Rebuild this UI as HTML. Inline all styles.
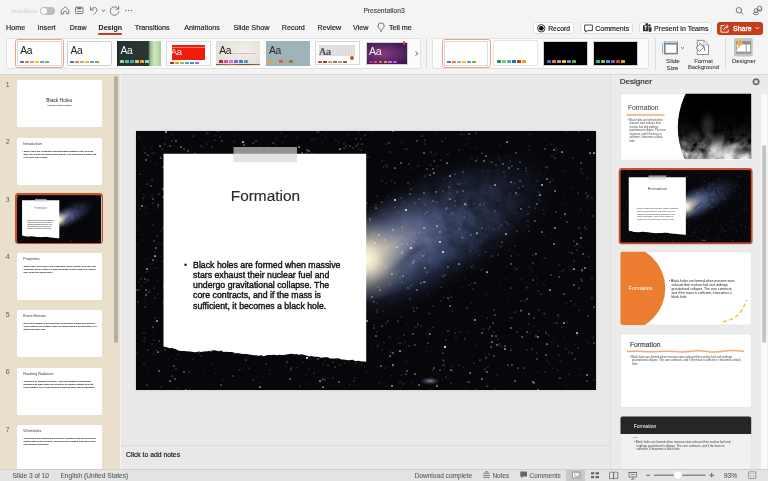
<!DOCTYPE html>
<html><head><meta charset="utf-8">
<style>
*{box-sizing:border-box;margin:0;padding:0}
html,body{width:768px;height:481px;overflow:hidden;background:#f4f4f4;font-family:"Liberation Sans",sans-serif;color:#262626}
.a{position:absolute}
.t{position:absolute;white-space:nowrap;line-height:1;-webkit-text-stroke:0.18px}
#top{left:0;top:0;width:768px;height:75px;background:#f4f4f4;border-bottom:1px solid #d6d6d6}
.gal{position:absolute;top:38px;height:31px;background:#fcfcfc;border:1px solid #e1e1e1;border-radius:2px}
.th{position:absolute;border:1px solid #d9d9d9;border-radius:2px;background:#fff;overflow:hidden}
.sel{position:absolute;border:1.5px solid #f09a85;border-radius:3px}
.dots{position:absolute;height:2.6px;display:flex;gap:0.6px}
.dots i{display:block;width:4.4px;height:2.6px;border-radius:0.5px}
#left{left:0;top:75px;width:120px;height:394px;background:#e9dfca}
.sl{position:absolute;left:17px;width:84.5px;height:47px;background:#fff;border-radius:2px;overflow:hidden}
.num{position:absolute;left:5.5px;font-size:7px;color:#333}
#main{left:121px;top:75px;width:490px;height:394px;background:#e9e9e9}
#designer{left:611px;top:75px;width:157px;height:394px;background:#ebebeb}
#status{left:0;top:469px;width:768px;height:12px;background:#e3e3e3;border-top:1px solid #cfcfcf}
</style></head><body>

<svg width="0" height="0" style="position:absolute">
<defs>
  <radialGradient id="gHalo" cx="0.5" cy="0.5" r="0.5">
    <stop offset="0" stop-color="#56668f" stop-opacity="0.62"/>
    <stop offset="0.55" stop-color="#3c4a72" stop-opacity="0.5"/>
    <stop offset="1" stop-color="#1a2030" stop-opacity="0"/>
  </radialGradient>
  <radialGradient id="gInner" cx="0.5" cy="0.5" r="0.5">
    <stop offset="0" stop-color="#d0ccc4" stop-opacity="0.8"/>
    <stop offset="0.45" stop-color="#7a80a4" stop-opacity="0.5"/>
    <stop offset="1" stop-color="#404a70" stop-opacity="0"/>
  </radialGradient>
  <radialGradient id="gCore" cx="0.5" cy="0.5" r="0.5">
    <stop offset="0" stop-color="#fffbe6" stop-opacity="1"/>
    <stop offset="0.25" stop-color="#f0e8c8" stop-opacity="0.9"/>
    <stop offset="0.6" stop-color="#b8b2a0" stop-opacity="0.45"/>
    <stop offset="1" stop-color="#707080" stop-opacity="0"/>
  </radialGradient>
  <radialGradient id="gSmall" cx="0.5" cy="0.5" r="0.5">
    <stop offset="0" stop-color="#e0e8ff" stop-opacity="0.95"/>
    <stop offset="1" stop-color="#6070a0" stop-opacity="0"/>
  </radialGradient>
  <filter id="mottle" x="0" y="0" width="460" height="259" filterUnits="userSpaceOnUse" color-interpolation-filters="sRGB">
    <feTurbulence type="fractalNoise" baseFrequency="0.075" numOctaves="3" seed="9" result="n"/>
    <feColorMatrix in="n" type="matrix" values="0 0 0 0 0  0 0 0 0 0  0 0 0 0 0  1.0 0 0 0 0.3" result="na"/>
    <feComposite in="SourceGraphic" in2="na" operator="in"/>
  </filter>
  <filter id="gblur" x="-50%" y="-50%" width="200%" height="200%"><feGaussianBlur stdDeviation="2.5"/></filter>
  <symbol id="galaxy" viewBox="0 0 460 259">
    <rect width="460" height="259" fill="#07070b"/>
    <g filter="url(#mottle)"><g transform="translate(300 98) rotate(-26)">
      <ellipse cx="0" cy="0" rx="135" ry="60" fill="url(#gHalo)"/>
      <ellipse cx="-20" cy="6" rx="110" ry="40" fill="url(#gHalo)"/>
    </g></g>
    <g transform="translate(230 128) rotate(-29)">
      <ellipse cx="30" cy="14" rx="95" ry="55" fill="url(#gHalo)" opacity="0.6"/>
      <ellipse cx="24" cy="0" rx="85" ry="46" fill="url(#gInner)"/>
      <path d="M-14 30 Q20 24 56 14" fill="none" stroke="#10131c" stroke-width="5" opacity="0.45" filter="url(#gblur)"/>
      <ellipse cx="0" cy="0" rx="44" ry="44" fill="url(#gCore)"/>
    </g>
    <ellipse cx="294" cy="250" rx="10" ry="4" fill="url(#gSmall)" opacity="0.6"/>
    <g fill="#f4f4ff"><circle cx="76" cy="179" r="0.5" opacity="0.7"/><circle cx="99" cy="205" r="0.65" opacity="0.7"/><circle cx="232" cy="61" r="0.3" opacity="0.6"/><circle cx="269" cy="18" r="0.5" opacity="0.5"/><circle cx="107" cy="11" r="1.1" opacity="0.8"/><circle cx="403" cy="160" r="0.3" opacity="0.6"/><circle cx="229" cy="30" r="0.85" opacity="0.6"/><circle cx="71" cy="212" r="0.3" opacity="1.0"/><circle cx="208" cy="143" r="0.4" opacity="0.7"/><circle cx="86" cy="10" r="0.65" opacity="0.5"/><circle cx="359" cy="54" r="0.85" opacity="0.9"/><circle cx="347" cy="198" r="0.4" opacity="0.8"/><circle cx="56" cy="123" r="0.65" opacity="0.5"/><circle cx="425" cy="230" r="0.4" opacity="0.6"/><circle cx="208" cy="100" r="1.1" opacity="0.6"/><circle cx="12" cy="24" r="0.5" opacity="1.0"/><circle cx="228" cy="127" r="0.4" opacity="0.8"/><circle cx="102" cy="158" r="0.4" opacity="0.8"/><circle cx="83" cy="44" r="0.4" opacity="1.0"/><circle cx="159" cy="155" r="0.4" opacity="0.5"/><circle cx="30" cy="211" r="0.5" opacity="0.6"/><circle cx="314" cy="175" r="0.65" opacity="1.0"/><circle cx="187" cy="256" r="0.85" opacity="0.8"/><circle cx="406" cy="127" r="0.4" opacity="0.5"/><circle cx="403" cy="42" r="0.3" opacity="0.9"/><circle cx="356" cy="125" r="0.65" opacity="0.4"/><circle cx="119" cy="75" r="0.4" opacity="0.5"/><circle cx="32" cy="88" r="0.65" opacity="1.0"/><circle cx="343" cy="124" r="0.3" opacity="1.0"/><circle cx="242" cy="189" r="0.3" opacity="0.5"/><circle cx="386" cy="206" r="0.65" opacity="0.8"/><circle cx="196" cy="151" r="0.65" opacity="0.6"/><circle cx="246" cy="71" r="0.5" opacity="0.4"/><circle cx="315" cy="247" r="0.3" opacity="0.8"/><circle cx="296" cy="221" r="0.4" opacity="0.6"/><circle cx="187" cy="248" r="0.65" opacity="0.5"/><circle cx="44" cy="24" r="0.3" opacity="0.7"/><circle cx="65" cy="225" r="0.5" opacity="0.5"/><circle cx="248" cy="84" r="0.4" opacity="0.5"/><circle cx="76" cy="48" r="0.4" opacity="0.8"/><circle cx="253" cy="12" r="0.5" opacity="0.9"/><circle cx="356" cy="205" r="0.3" opacity="0.7"/><circle cx="29" cy="198" r="0.3" opacity="0.8"/><circle cx="116" cy="180" r="0.4" opacity="0.4"/><circle cx="179" cy="80" r="0.65" opacity="0.6"/><circle cx="231" cy="142" r="0.85" opacity="0.5"/><circle cx="277" cy="132" r="0.5" opacity="1.0"/><circle cx="143" cy="181" r="0.4" opacity="0.7"/><circle cx="29" cy="211" r="0.85" opacity="0.6"/><circle cx="146" cy="257" r="0.3" opacity="0.4"/><circle cx="34" cy="211" r="0.5" opacity="0.7"/><circle cx="286" cy="5" r="0.5" opacity="0.7"/><circle cx="238" cy="101" r="0.4" opacity="0.5"/><circle cx="22" cy="112" r="0.3" opacity="0.8"/><circle cx="376" cy="187" r="0.4" opacity="0.5"/><circle cx="177" cy="126" r="0.5" opacity="1.0"/><circle cx="39" cy="124" r="0.4" opacity="0.8"/><circle cx="410" cy="202" r="0.5" opacity="0.9"/><circle cx="307" cy="222" r="0.5" opacity="0.8"/><circle cx="113" cy="237" r="0.4" opacity="0.8"/><circle cx="379" cy="250" r="1.1" opacity="0.4"/><circle cx="144" cy="81" r="0.4" opacity="0.5"/><circle cx="254" cy="21" r="0.4" opacity="1.0"/><circle cx="341" cy="120" r="0.3" opacity="1.0"/><circle cx="324" cy="53" r="0.4" opacity="0.8"/><circle cx="314" cy="68" r="0.85" opacity="0.6"/><circle cx="117" cy="219" r="0.3" opacity="0.8"/><circle cx="92" cy="155" r="0.3" opacity="0.6"/><circle cx="433" cy="121" r="0.4" opacity="0.8"/><circle cx="129" cy="45" r="0.4" opacity="0.6"/><circle cx="87" cy="249" r="0.3" opacity="0.9"/><circle cx="430" cy="182" r="0.3" opacity="0.7"/><circle cx="18" cy="157" r="0.5" opacity="0.5"/><circle cx="3" cy="141" r="0.3" opacity="0.6"/><circle cx="209" cy="232" r="0.4" opacity="0.5"/><circle cx="364" cy="213" r="0.4" opacity="0.4"/><circle cx="86" cy="104" r="0.4" opacity="0.5"/><circle cx="369" cy="218" r="0.85" opacity="0.9"/><circle cx="8" cy="151" r="0.3" opacity="0.9"/><circle cx="344" cy="197" r="0.3" opacity="0.4"/><circle cx="375" cy="157" r="0.5" opacity="0.7"/><circle cx="368" cy="88" r="0.3" opacity="0.6"/><circle cx="137" cy="162" r="0.65" opacity="0.4"/><circle cx="31" cy="133" r="0.5" opacity="0.5"/><circle cx="124" cy="15" r="0.3" opacity="0.7"/><circle cx="313" cy="169" r="0.3" opacity="0.5"/><circle cx="428" cy="139" r="0.4" opacity="0.8"/><circle cx="335" cy="136" r="0.3" opacity="0.9"/><circle cx="98" cy="10" r="0.4" opacity="0.7"/><circle cx="289" cy="45" r="0.5" opacity="0.7"/><circle cx="75" cy="220" r="0.65" opacity="0.9"/><circle cx="313" cy="56" r="0.5" opacity="0.9"/><circle cx="245" cy="235" r="0.85" opacity="0.6"/><circle cx="433" cy="243" r="0.5" opacity="0.4"/><circle cx="162" cy="159" r="0.5" opacity="0.9"/><circle cx="298" cy="42" r="0.85" opacity="0.7"/><circle cx="406" cy="54" r="1.1" opacity="0.7"/><circle cx="357" cy="192" r="0.65" opacity="0.6"/><circle cx="38" cy="105" r="0.3" opacity="0.7"/><circle cx="375" cy="94" r="0.3" opacity="0.4"/><circle cx="195" cy="150" r="0.3" opacity="0.8"/><circle cx="97" cy="28" r="0.85" opacity="0.7"/><circle cx="412" cy="133" r="0.3" opacity="0.5"/><circle cx="195" cy="166" r="0.5" opacity="0.9"/><circle cx="299" cy="66" r="0.4" opacity="0.6"/><circle cx="225" cy="69" r="0.4" opacity="0.7"/><circle cx="16" cy="213" r="0.4" opacity="0.9"/><circle cx="339" cy="189" r="1.1" opacity="0.6"/><circle cx="181" cy="1" r="0.5" opacity="0.7"/><circle cx="265" cy="258" r="0.3" opacity="0.5"/><circle cx="338" cy="210" r="0.4" opacity="0.4"/><circle cx="170" cy="214" r="0.4" opacity="0.7"/><circle cx="179" cy="163" r="0.4" opacity="0.8"/><circle cx="398" cy="195" r="0.4" opacity="0.6"/><circle cx="360" cy="205" r="0.85" opacity="0.5"/><circle cx="390" cy="231" r="0.3" opacity="0.6"/><circle cx="291" cy="38" r="0.65" opacity="0.6"/><circle cx="314" cy="77" r="0.3" opacity="0.5"/><circle cx="229" cy="185" r="0.3" opacity="0.8"/><circle cx="154" cy="168" r="0.4" opacity="0.5"/><circle cx="65" cy="15" r="0.5" opacity="0.6"/><circle cx="57" cy="228" r="0.5" opacity="0.4"/><circle cx="333" cy="154" r="0.4" opacity="0.7"/><circle cx="443" cy="97" r="0.5" opacity="0.8"/><circle cx="168" cy="90" r="0.5" opacity="0.8"/><circle cx="210" cy="133" r="0.3" opacity="0.9"/><circle cx="9" cy="167" r="0.4" opacity="0.5"/><circle cx="270" cy="151" r="0.3" opacity="0.7"/><circle cx="76" cy="207" r="0.4" opacity="0.6"/><circle cx="99" cy="12" r="0.3" opacity="0.5"/><circle cx="287" cy="219" r="0.3" opacity="0.5"/><circle cx="246" cy="30" r="0.4" opacity="0.9"/><circle cx="93" cy="181" r="0.4" opacity="0.5"/><circle cx="112" cy="155" r="0.3" opacity="0.5"/><circle cx="265" cy="212" r="0.4" opacity="0.8"/><circle cx="4" cy="78" r="0.4" opacity="0.9"/><circle cx="164" cy="203" r="0.3" opacity="0.7"/><circle cx="410" cy="200" r="0.4" opacity="0.5"/><circle cx="426" cy="21" r="0.85" opacity="0.9"/><circle cx="331" cy="137" r="0.3" opacity="0.6"/><circle cx="305" cy="170" r="0.4" opacity="0.9"/><circle cx="25" cy="74" r="0.3" opacity="0.6"/><circle cx="365" cy="195" r="0.3" opacity="0.6"/><circle cx="52" cy="171" r="0.4" opacity="0.5"/><circle cx="172" cy="224" r="0.4" opacity="0.8"/><circle cx="289" cy="123" r="0.4" opacity="0.6"/><circle cx="91" cy="128" r="0.4" opacity="0.6"/><circle cx="86" cy="237" r="0.4" opacity="0.5"/><circle cx="15" cy="55" r="0.65" opacity="0.6"/><circle cx="307" cy="60" r="0.5" opacity="0.7"/><circle cx="339" cy="137" r="0.4" opacity="0.6"/><circle cx="273" cy="215" r="0.5" opacity="0.7"/><circle cx="151" cy="231" r="0.65" opacity="0.5"/><circle cx="312" cy="200" r="0.5" opacity="1.0"/><circle cx="404" cy="64" r="1.1" opacity="0.6"/><circle cx="175" cy="253" r="0.3" opacity="0.6"/><circle cx="288" cy="71" r="0.3" opacity="0.9"/><circle cx="282" cy="193" r="0.5" opacity="0.9"/><circle cx="411" cy="213" r="0.85" opacity="0.7"/><circle cx="323" cy="133" r="0.85" opacity="0.8"/><circle cx="198" cy="172" r="0.3" opacity="0.5"/><circle cx="178" cy="35" r="0.3" opacity="0.5"/><circle cx="209" cy="198" r="0.3" opacity="0.8"/><circle cx="51" cy="132" r="0.3" opacity="0.7"/><circle cx="327" cy="107" r="0.4" opacity="0.8"/><circle cx="53" cy="90" r="0.5" opacity="0.9"/><circle cx="451" cy="67" r="0.5" opacity="0.6"/><circle cx="323" cy="219" r="0.3" opacity="0.6"/><circle cx="431" cy="91" r="0.5" opacity="0.9"/><circle cx="128" cy="203" r="0.3" opacity="0.6"/><circle cx="77" cy="90" r="0.3" opacity="0.4"/><circle cx="369" cy="45" r="0.4" opacity="0.7"/><circle cx="391" cy="219" r="0.5" opacity="0.5"/><circle cx="350" cy="25" r="0.85" opacity="0.6"/><circle cx="116" cy="56" r="0.4" opacity="0.9"/><circle cx="393" cy="193" r="0.5" opacity="0.5"/><circle cx="148" cy="79" r="0.4" opacity="0.9"/><circle cx="458" cy="22" r="0.85" opacity="1.0"/><circle cx="212" cy="179" r="0.5" opacity="0.5"/><circle cx="283" cy="254" r="0.65" opacity="0.9"/><circle cx="39" cy="185" r="0.4" opacity="0.9"/><circle cx="77" cy="142" r="0.3" opacity="0.9"/><circle cx="332" cy="8" r="0.4" opacity="0.5"/><circle cx="292" cy="163" r="0.3" opacity="1.0"/><circle cx="444" cy="114" r="0.4" opacity="0.6"/><circle cx="279" cy="103" r="0.4" opacity="0.8"/><circle cx="86" cy="77" r="0.5" opacity="0.5"/><circle cx="32" cy="236" r="0.3" opacity="0.6"/><circle cx="144" cy="68" r="0.4" opacity="0.7"/><circle cx="53" cy="138" r="0.3" opacity="0.4"/><circle cx="93" cy="62" r="0.4" opacity="0.6"/><circle cx="385" cy="170" r="0.4" opacity="0.9"/><circle cx="316" cy="82" r="0.5" opacity="0.8"/><circle cx="246" cy="195" r="0.5" opacity="1.0"/><circle cx="121" cy="174" r="0.85" opacity="0.7"/><circle cx="416" cy="25" r="0.5" opacity="0.6"/><circle cx="345" cy="110" r="0.4" opacity="0.5"/><circle cx="118" cy="224" r="0.5" opacity="0.8"/><circle cx="53" cy="76" r="0.85" opacity="0.5"/><circle cx="247" cy="180" r="0.4" opacity="0.7"/><circle cx="446" cy="202" r="0.3" opacity="0.7"/><circle cx="193" cy="177" r="0.5" opacity="0.6"/><circle cx="319" cy="112" r="0.3" opacity="0.6"/><circle cx="173" cy="51" r="0.5" opacity="1.0"/><circle cx="428" cy="163" r="0.65" opacity="0.7"/><circle cx="270" cy="231" r="0.3" opacity="0.6"/><circle cx="172" cy="88" r="0.4" opacity="0.4"/><circle cx="312" cy="248" r="0.3" opacity="0.5"/><circle cx="154" cy="206" r="0.3" opacity="0.9"/><circle cx="79" cy="154" r="0.5" opacity="0.8"/><circle cx="39" cy="248" r="0.65" opacity="0.7"/><circle cx="395" cy="156" r="0.3" opacity="0.6"/><circle cx="378" cy="120" r="0.3" opacity="0.5"/><circle cx="86" cy="152" r="0.5" opacity="0.7"/><circle cx="186" cy="249" r="0.4" opacity="0.8"/><circle cx="94" cy="133" r="0.3" opacity="0.5"/><circle cx="155" cy="30" r="0.4" opacity="0.8"/><circle cx="253" cy="206" r="0.4" opacity="0.5"/><circle cx="335" cy="104" r="0.5" opacity="1.0"/><circle cx="241" cy="65" r="0.4" opacity="0.7"/><circle cx="147" cy="26" r="0.4" opacity="0.8"/><circle cx="375" cy="197" r="0.65" opacity="0.9"/><circle cx="189" cy="167" r="0.3" opacity="0.9"/><circle cx="326" cy="69" r="0.4" opacity="0.6"/><circle cx="366" cy="111" r="0.5" opacity="1.0"/><circle cx="358" cy="98" r="0.4" opacity="1.0"/><circle cx="416" cy="49" r="0.4" opacity="0.9"/><circle cx="348" cy="73" r="0.4" opacity="1.0"/><circle cx="41" cy="71" r="0.5" opacity="0.9"/><circle cx="436" cy="122" r="0.5" opacity="1.0"/><circle cx="152" cy="59" r="0.3" opacity="0.9"/><circle cx="64" cy="142" r="0.85" opacity="0.5"/><circle cx="289" cy="137" r="0.85" opacity="0.7"/><circle cx="226" cy="234" r="0.5" opacity="0.5"/><circle cx="370" cy="103" r="0.85" opacity="1.0"/><circle cx="227" cy="108" r="0.3" opacity="0.6"/><circle cx="95" cy="44" r="0.5" opacity="0.4"/><circle cx="275" cy="155" r="0.5" opacity="0.7"/><circle cx="427" cy="73" r="0.3" opacity="0.7"/><circle cx="124" cy="256" r="0.85" opacity="0.8"/><circle cx="383" cy="63" r="0.4" opacity="0.6"/><circle cx="159" cy="97" r="0.4" opacity="0.8"/><circle cx="12" cy="140" r="0.3" opacity="1.0"/><circle cx="254" cy="153" r="0.4" opacity="0.8"/><circle cx="327" cy="236" r="0.4" opacity="0.6"/><circle cx="289" cy="13" r="0.5" opacity="0.6"/><circle cx="331" cy="34" r="0.4" opacity="0.5"/><circle cx="17" cy="68" r="0.65" opacity="0.6"/><circle cx="240" cy="205" r="0.85" opacity="0.6"/><circle cx="319" cy="202" r="0.5" opacity="0.6"/><circle cx="218" cy="203" r="0.3" opacity="0.7"/><circle cx="291" cy="220" r="0.3" opacity="0.8"/><circle cx="100" cy="41" r="0.4" opacity="0.8"/><circle cx="294" cy="246" r="0.3" opacity="0.7"/><circle cx="221" cy="67" r="0.65" opacity="0.5"/><circle cx="120" cy="10" r="0.5" opacity="0.8"/><circle cx="103" cy="239" r="0.5" opacity="0.5"/><circle cx="433" cy="221" r="0.4" opacity="0.9"/><circle cx="60" cy="90" r="0.4" opacity="1.0"/><circle cx="137" cy="100" r="0.3" opacity="0.9"/><circle cx="84" cy="220" r="0.4" opacity="0.7"/><circle cx="403" cy="69" r="0.4" opacity="0.8"/><circle cx="266" cy="106" r="0.5" opacity="0.6"/><circle cx="71" cy="2" r="0.5" opacity="0.7"/><circle cx="368" cy="41" r="0.5" opacity="0.7"/><circle cx="242" cy="215" r="0.4" opacity="0.7"/><circle cx="297" cy="38" r="0.65" opacity="0.7"/><circle cx="19" cy="125" r="0.85" opacity="1.0"/><circle cx="196" cy="69" r="0.85" opacity="0.6"/><circle cx="8" cy="64" r="0.4" opacity="0.8"/><circle cx="31" cy="87" r="0.5" opacity="0.6"/><circle cx="81" cy="184" r="0.4" opacity="0.8"/><circle cx="223" cy="210" r="0.4" opacity="1.0"/><circle cx="374" cy="187" r="0.4" opacity="0.8"/><circle cx="173" cy="20" r="0.65" opacity="0.9"/><circle cx="353" cy="223" r="0.4" opacity="1.0"/><circle cx="218" cy="254" r="0.3" opacity="0.6"/><circle cx="263" cy="212" r="0.4" opacity="0.9"/><circle cx="172" cy="175" r="0.5" opacity="0.8"/><circle cx="10" cy="170" r="0.3" opacity="0.6"/><circle cx="53" cy="198" r="0.3" opacity="0.8"/><circle cx="33" cy="54" r="0.5" opacity="1.0"/><circle cx="33" cy="159" r="0.4" opacity="0.8"/><circle cx="36" cy="4" r="0.3" opacity="0.9"/><circle cx="226" cy="159" r="0.3" opacity="0.8"/><circle cx="414" cy="51" r="0.5" opacity="0.9"/><circle cx="456" cy="147" r="0.5" opacity="0.6"/><circle cx="359" cy="80" r="0.5" opacity="0.8"/><circle cx="455" cy="204" r="0.3" opacity="0.5"/><circle cx="164" cy="103" r="0.5" opacity="0.6"/><circle cx="257" cy="117" r="0.4" opacity="0.8"/><circle cx="200" cy="254" r="0.3" opacity="0.9"/><circle cx="293" cy="119" r="0.3" opacity="0.8"/><circle cx="370" cy="91" r="0.5" opacity="0.7"/><circle cx="42" cy="223" r="0.4" opacity="0.7"/><circle cx="350" cy="227" r="0.65" opacity="0.6"/><circle cx="390" cy="40" r="0.4" opacity="0.7"/><circle cx="398" cy="187" r="0.5" opacity="0.9"/><circle cx="160" cy="115" r="0.3" opacity="0.6"/><circle cx="92" cy="189" r="0.3" opacity="0.9"/><circle cx="276" cy="116" r="0.3" opacity="0.7"/><circle cx="259" cy="37" r="0.85" opacity="0.6"/><circle cx="200" cy="74" r="0.4" opacity="0.6"/><circle cx="393" cy="19" r="0.4" opacity="0.8"/><circle cx="221" cy="84" r="0.4" opacity="0.4"/><circle cx="141" cy="113" r="0.5" opacity="0.7"/><circle cx="191" cy="169" r="0.3" opacity="0.7"/><circle cx="90" cy="160" r="0.4" opacity="0.8"/><circle cx="402" cy="206" r="1.1" opacity="0.5"/><circle cx="439" cy="115" r="0.4" opacity="0.7"/><circle cx="424" cy="247" r="0.65" opacity="0.6"/><circle cx="55" cy="53" r="0.5" opacity="0.8"/><circle cx="30" cy="1" r="1.1" opacity="0.6"/><circle cx="19" cy="121" r="0.3" opacity="0.9"/><circle cx="244" cy="159" r="0.85" opacity="0.5"/><circle cx="99" cy="204" r="0.5" opacity="0.7"/><circle cx="164" cy="160" r="0.85" opacity="1.0"/><circle cx="422" cy="253" r="0.3" opacity="0.4"/><circle cx="381" cy="64" r="0.4" opacity="0.7"/><circle cx="448" cy="115" r="0.3" opacity="0.5"/><circle cx="416" cy="211" r="0.3" opacity="1.0"/><circle cx="171" cy="188" r="0.4" opacity="0.9"/><circle cx="225" cy="8" r="0.4" opacity="0.9"/><circle cx="189" cy="214" r="0.4" opacity="0.6"/><circle cx="165" cy="59" r="0.4" opacity="1.0"/><circle cx="272" cy="199" r="0.3" opacity="0.6"/><circle cx="267" cy="99" r="0.3" opacity="0.9"/><circle cx="59" cy="171" r="1.1" opacity="0.6"/><circle cx="124" cy="86" r="0.4" opacity="1.0"/><circle cx="67" cy="63" r="0.65" opacity="0.6"/><circle cx="307" cy="187" r="0.3" opacity="0.4"/><circle cx="349" cy="238" r="0.5" opacity="0.7"/><circle cx="46" cy="136" r="0.3" opacity="0.6"/><circle cx="16" cy="133" r="0.4" opacity="0.6"/><circle cx="102" cy="17" r="0.3" opacity="0.5"/><circle cx="452" cy="9" r="0.5" opacity="0.7"/><circle cx="270" cy="79" r="1.1" opacity="0.9"/><circle cx="186" cy="112" r="0.65" opacity="0.5"/><circle cx="402" cy="160" r="0.4" opacity="0.7"/><circle cx="272" cy="24" r="0.3" opacity="0.6"/><circle cx="102" cy="22" r="0.5" opacity="0.7"/><circle cx="341" cy="102" r="0.85" opacity="0.5"/><circle cx="236" cy="110" r="0.5" opacity="0.5"/><circle cx="251" cy="118" r="0.5" opacity="0.5"/><circle cx="250" cy="255" r="0.3" opacity="1.0"/><circle cx="445" cy="116" r="0.3" opacity="0.7"/><circle cx="443" cy="0" r="0.5" opacity="0.9"/><circle cx="53" cy="156" r="0.3" opacity="0.5"/><circle cx="240" cy="77" r="0.5" opacity="0.7"/><circle cx="106" cy="238" r="0.3" opacity="0.9"/><circle cx="130" cy="233" r="0.5" opacity="0.7"/><circle cx="99" cy="222" r="0.65" opacity="1.0"/><circle cx="271" cy="240" r="0.65" opacity="0.8"/><circle cx="156" cy="156" r="0.4" opacity="0.9"/><circle cx="254" cy="225" r="0.65" opacity="0.9"/><circle cx="93" cy="87" r="0.3" opacity="0.6"/><circle cx="72" cy="78" r="0.5" opacity="0.5"/><circle cx="422" cy="239" r="0.5" opacity="0.5"/><circle cx="134" cy="118" r="0.5" opacity="1.0"/><circle cx="9" cy="22" r="0.65" opacity="0.4"/><circle cx="411" cy="48" r="0.85" opacity="0.7"/><circle cx="279" cy="214" r="0.65" opacity="0.6"/><circle cx="212" cy="204" r="0.3" opacity="0.6"/><circle cx="401" cy="228" r="0.65" opacity="0.6"/><circle cx="158" cy="27" r="0.65" opacity="0.4"/><circle cx="84" cy="6" r="0.4" opacity="1.0"/><circle cx="32" cy="65" r="0.3" opacity="0.8"/><circle cx="164" cy="45" r="0.5" opacity="0.9"/><circle cx="76" cy="16" r="0.4" opacity="1.0"/><circle cx="27" cy="36" r="0.5" opacity="0.9"/><circle cx="208" cy="12" r="0.4" opacity="0.5"/><circle cx="34" cy="15" r="0.85" opacity="0.5"/><circle cx="219" cy="213" r="0.3" opacity="0.6"/><circle cx="365" cy="146" r="0.3" opacity="0.7"/><circle cx="458" cy="212" r="0.85" opacity="0.4"/><circle cx="27" cy="130" r="0.3" opacity="1.0"/><circle cx="134" cy="142" r="0.65" opacity="0.7"/><circle cx="352" cy="40" r="0.4" opacity="0.8"/><circle cx="215" cy="48" r="0.65" opacity="0.6"/><circle cx="420" cy="81" r="0.65" opacity="0.5"/><circle cx="310" cy="246" r="0.5" opacity="0.6"/><circle cx="451" cy="250" r="0.65" opacity="0.5"/><circle cx="41" cy="159" r="0.3" opacity="0.4"/><circle cx="255" cy="245" r="0.3" opacity="0.9"/><circle cx="442" cy="244" r="0.3" opacity="0.5"/><circle cx="439" cy="250" r="0.3" opacity="0.5"/><circle cx="328" cy="25" r="0.3" opacity="0.5"/><circle cx="266" cy="96" r="0.65" opacity="0.5"/><circle cx="413" cy="204" r="0.4" opacity="0.8"/><circle cx="311" cy="32" r="0.85" opacity="0.7"/><circle cx="237" cy="221" r="0.3" opacity="0.6"/><circle cx="14" cy="191" r="0.3" opacity="0.8"/><circle cx="330" cy="258" r="0.3" opacity="0.6"/><circle cx="363" cy="115" r="0.3" opacity="0.8"/><circle cx="365" cy="116" r="0.4" opacity="0.5"/><circle cx="187" cy="218" r="0.4" opacity="1.0"/><circle cx="165" cy="123" r="0.5" opacity="0.9"/><circle cx="389" cy="109" r="0.4" opacity="0.5"/><circle cx="248" cy="212" r="0.3" opacity="0.6"/><circle cx="30" cy="118" r="0.4" opacity="1.0"/><circle cx="308" cy="238" r="0.3" opacity="0.7"/><circle cx="323" cy="19" r="0.4" opacity="0.8"/><circle cx="12" cy="53" r="0.5" opacity="0.5"/><circle cx="293" cy="109" r="0.4" opacity="0.9"/><circle cx="182" cy="228" r="0.65" opacity="0.7"/><circle cx="47" cy="86" r="0.85" opacity="0.6"/><circle cx="272" cy="52" r="0.5" opacity="0.8"/><circle cx="409" cy="154" r="0.3" opacity="0.9"/><circle cx="265" cy="244" r="0.4" opacity="0.6"/><circle cx="204" cy="145" r="0.5" opacity="0.8"/><circle cx="396" cy="139" r="0.3" opacity="0.9"/><circle cx="327" cy="41" r="0.4" opacity="0.9"/><circle cx="265" cy="32" r="0.65" opacity="0.8"/><circle cx="91" cy="180" r="0.65" opacity="0.7"/><circle cx="436" cy="139" r="0.3" opacity="0.8"/><circle cx="382" cy="237" r="0.5" opacity="1.0"/><circle cx="369" cy="123" r="0.3" opacity="0.5"/><circle cx="23" cy="240" r="0.65" opacity="0.9"/><circle cx="357" cy="117" r="0.4" opacity="0.4"/><circle cx="74" cy="104" r="0.3" opacity="0.6"/><circle cx="239" cy="42" r="0.3" opacity="0.5"/><circle cx="210" cy="217" r="0.4" opacity="0.8"/><circle cx="329" cy="208" r="0.5" opacity="0.7"/><circle cx="21" cy="44" r="0.3" opacity="0.6"/><circle cx="275" cy="129" r="0.3" opacity="0.5"/><circle cx="340" cy="258" r="0.5" opacity="0.5"/><circle cx="320" cy="207" r="0.4" opacity="0.8"/><circle cx="397" cy="124" r="0.5" opacity="0.5"/><circle cx="385" cy="148" r="0.3" opacity="0.8"/><circle cx="379" cy="115" r="0.4" opacity="0.8"/><circle cx="458" cy="249" r="0.4" opacity="0.7"/><circle cx="173" cy="37" r="0.4" opacity="0.6"/><circle cx="220" cy="215" r="0.4" opacity="1.0"/><circle cx="93" cy="48" r="0.3" opacity="0.8"/><circle cx="132" cy="57" r="0.5" opacity="1.0"/><circle cx="346" cy="248" r="0.85" opacity="0.7"/><circle cx="101" cy="198" r="0.3" opacity="0.4"/><circle cx="172" cy="191" r="0.5" opacity="0.6"/><circle cx="58" cy="45" r="0.5" opacity="0.7"/><circle cx="250" cy="192" r="0.4" opacity="0.9"/><circle cx="423" cy="134" r="0.4" opacity="0.7"/><circle cx="115" cy="45" r="0.5" opacity="0.7"/><circle cx="10" cy="102" r="0.4" opacity="0.4"/><circle cx="10" cy="159" r="0.65" opacity="0.9"/><circle cx="275" cy="58" r="0.5" opacity="0.6"/><circle cx="106" cy="85" r="0.3" opacity="0.5"/><circle cx="454" cy="22" r="0.85" opacity="0.8"/><circle cx="341" cy="29" r="0.5" opacity="0.5"/><circle cx="234" cy="117" r="0.65" opacity="0.5"/><circle cx="3" cy="151" r="0.4" opacity="0.8"/><circle cx="40" cy="96" r="0.5" opacity="0.8"/><circle cx="145" cy="2" r="0.3" opacity="0.9"/><circle cx="126" cy="18" r="0.3" opacity="0.5"/><circle cx="250" cy="13" r="0.4" opacity="0.8"/><circle cx="247" cy="155" r="0.3" opacity="0.6"/><circle cx="344" cy="74" r="0.65" opacity="0.5"/><circle cx="220" cy="232" r="0.5" opacity="0.6"/><circle cx="168" cy="73" r="0.5" opacity="0.6"/><circle cx="385" cy="180" r="0.65" opacity="0.7"/><circle cx="130" cy="178" r="0.4" opacity="0.4"/><circle cx="207" cy="48" r="0.3" opacity="0.6"/><circle cx="439" cy="173" r="0.4" opacity="0.7"/><circle cx="178" cy="146" r="0.3" opacity="0.9"/><circle cx="365" cy="115" r="0.4" opacity="0.6"/><circle cx="355" cy="216" r="0.85" opacity="0.5"/><circle cx="418" cy="57" r="0.3" opacity="0.6"/><circle cx="298" cy="30" r="0.5" opacity="1.0"/><circle cx="358" cy="214" r="0.3" opacity="0.6"/><circle cx="114" cy="96" r="0.65" opacity="1.0"/><circle cx="122" cy="145" r="0.5" opacity="1.0"/><circle cx="207" cy="31" r="0.3" opacity="0.5"/><circle cx="219" cy="24" r="0.5" opacity="0.5"/><circle cx="19" cy="187" r="0.4" opacity="0.9"/><circle cx="266" cy="99" r="0.3" opacity="0.9"/><circle cx="313" cy="68" r="0.3" opacity="0.8"/><circle cx="428" cy="192" r="0.85" opacity="1.0"/><circle cx="58" cy="48" r="0.4" opacity="0.5"/><circle cx="223" cy="211" r="0.3" opacity="0.9"/><circle cx="117" cy="211" r="0.3" opacity="0.5"/><circle cx="21" cy="150" r="0.3" opacity="0.8"/><circle cx="192" cy="234" r="0.4" opacity="0.9"/><circle cx="346" cy="97" r="0.5" opacity="0.8"/><circle cx="273" cy="110" r="0.3" opacity="0.7"/><circle cx="239" cy="112" r="1.1" opacity="0.5"/><circle cx="419" cy="145" r="0.3" opacity="0.7"/><circle cx="86" cy="128" r="0.4" opacity="0.9"/><circle cx="418" cy="19" r="0.65" opacity="1.0"/><circle cx="70" cy="21" r="0.4" opacity="0.4"/><circle cx="57" cy="132" r="0.3" opacity="0.8"/><circle cx="96" cy="173" r="0.5" opacity="0.4"/><circle cx="315" cy="239" r="1.1" opacity="0.4"/><circle cx="317" cy="83" r="0.4" opacity="0.7"/><circle cx="22" cy="163" r="0.3" opacity="0.9"/><circle cx="47" cy="161" r="0.4" opacity="0.4"/><circle cx="52" cy="128" r="0.4" opacity="0.5"/><circle cx="47" cy="60" r="0.65" opacity="0.5"/><circle cx="348" cy="30" r="0.65" opacity="0.9"/><circle cx="406" cy="101" r="0.85" opacity="0.6"/><circle cx="290" cy="215" r="0.3" opacity="0.4"/><circle cx="319" cy="59" r="0.3" opacity="0.7"/><circle cx="79" cy="70" r="0.3" opacity="0.5"/><circle cx="375" cy="219" r="0.5" opacity="0.7"/><circle cx="424" cy="141" r="0.4" opacity="0.4"/><circle cx="164" cy="56" r="0.5" opacity="1.0"/><circle cx="289" cy="83" r="0.65" opacity="0.4"/><circle cx="371" cy="11" r="0.85" opacity="0.9"/><circle cx="453" cy="125" r="0.5" opacity="0.6"/><circle cx="345" cy="139" r="0.4" opacity="0.9"/><circle cx="432" cy="72" r="0.3" opacity="1.0"/><circle cx="155" cy="95" r="0.4" opacity="0.6"/><circle cx="210" cy="71" r="0.4" opacity="0.9"/><circle cx="351" cy="241" r="0.85" opacity="0.6"/><circle cx="358" cy="179" r="0.5" opacity="0.7"/><circle cx="423" cy="146" r="0.85" opacity="0.5"/><circle cx="165" cy="34" r="0.5" opacity="0.7"/><circle cx="147" cy="87" r="0.4" opacity="0.6"/><circle cx="227" cy="161" r="0.3" opacity="0.5"/><circle cx="241" cy="172" r="0.4" opacity="0.8"/><circle cx="199" cy="236" r="0.5" opacity="0.7"/><circle cx="262" cy="208" r="0.3" opacity="0.6"/><circle cx="230" cy="131" r="0.3" opacity="0.7"/><circle cx="423" cy="224" r="0.4" opacity="0.8"/><circle cx="171" cy="19" r="0.65" opacity="0.7"/><circle cx="281" cy="159" r="0.85" opacity="0.6"/><circle cx="262" cy="190" r="0.5" opacity="0.9"/><circle cx="19" cy="206" r="0.3" opacity="0.6"/><circle cx="162" cy="207" r="0.65" opacity="0.7"/><circle cx="256" cy="172" r="0.3" opacity="0.6"/><circle cx="208" cy="13" r="0.4" opacity="0.6"/><circle cx="59" cy="49" r="0.4" opacity="0.8"/><circle cx="392" cy="83" r="0.5" opacity="0.8"/><circle cx="47" cy="52" r="0.65" opacity="0.5"/><circle cx="288" cy="151" r="0.65" opacity="0.9"/><circle cx="376" cy="35" r="0.5" opacity="0.9"/><circle cx="306" cy="248" r="0.3" opacity="0.7"/><circle cx="445" cy="78" r="0.4" opacity="0.6"/><circle cx="172" cy="112" r="0.4" opacity="0.6"/><circle cx="230" cy="241" r="0.4" opacity="0.5"/><circle cx="422" cy="184" r="0.5" opacity="0.9"/><circle cx="452" cy="79" r="0.3" opacity="0.8"/><circle cx="304" cy="101" r="0.65" opacity="0.9"/><circle cx="262" cy="159" r="0.4" opacity="0.5"/><circle cx="135" cy="188" r="0.4" opacity="0.7"/><circle cx="301" cy="243" r="0.3" opacity="0.5"/><circle cx="354" cy="56" r="0.4" opacity="0.7"/><circle cx="308" cy="166" r="0.4" opacity="0.8"/><circle cx="430" cy="218" r="0.4" opacity="0.8"/><circle cx="134" cy="239" r="0.3" opacity="0.7"/><circle cx="352" cy="236" r="0.4" opacity="0.7"/><circle cx="279" cy="196" r="0.4" opacity="0.8"/><circle cx="117" cy="20" r="0.3" opacity="0.5"/><circle cx="187" cy="34" r="0.5" opacity="0.8"/><circle cx="177" cy="46" r="0.4" opacity="0.9"/><circle cx="385" cy="179" r="0.4" opacity="0.9"/><circle cx="234" cy="88" r="0.65" opacity="0.8"/><circle cx="26" cy="18" r="0.4" opacity="0.9"/><circle cx="201" cy="137" r="0.3" opacity="0.8"/><circle cx="188" cy="94" r="0.3" opacity="0.8"/><circle cx="381" cy="138" r="0.5" opacity="0.7"/><circle cx="326" cy="181" r="0.3" opacity="1.0"/><circle cx="226" cy="13" r="0.5" opacity="0.9"/><circle cx="169" cy="155" r="0.3" opacity="0.8"/><circle cx="310" cy="209" r="0.4" opacity="1.0"/><circle cx="191" cy="1" r="0.3" opacity="0.6"/><circle cx="103" cy="60" r="0.3" opacity="0.8"/><circle cx="409" cy="241" r="0.4" opacity="0.7"/><circle cx="242" cy="156" r="0.5" opacity="0.7"/><circle cx="9" cy="82" r="0.3" opacity="0.8"/><circle cx="445" cy="148" r="0.5" opacity="0.7"/><circle cx="447" cy="43" r="0.4" opacity="0.6"/><circle cx="211" cy="56" r="0.5" opacity="0.6"/><circle cx="123" cy="222" r="0.3" opacity="0.5"/><circle cx="427" cy="173" r="0.3" opacity="0.5"/><circle cx="309" cy="216" r="1.1" opacity="1.0"/><circle cx="346" cy="22" r="0.5" opacity="0.7"/><circle cx="245" cy="6" r="0.3" opacity="0.7"/><circle cx="297" cy="70" r="0.85" opacity="0.4"/><circle cx="402" cy="241" r="0.3" opacity="0.9"/><circle cx="283" cy="113" r="0.4" opacity="0.7"/><circle cx="426" cy="196" r="0.4" opacity="0.7"/><circle cx="81" cy="142" r="0.65" opacity="0.8"/><circle cx="275" cy="117" r="1.1" opacity="0.9"/><circle cx="238" cy="171" r="0.65" opacity="0.6"/><circle cx="289" cy="74" r="0.5" opacity="0.6"/><circle cx="443" cy="179" r="0.4" opacity="0.7"/><circle cx="268" cy="69" r="0.3" opacity="0.7"/><circle cx="135" cy="122" r="0.3" opacity="0.5"/><circle cx="450" cy="98" r="0.5" opacity="0.5"/><circle cx="40" cy="179" r="0.4" opacity="0.9"/><circle cx="10" cy="128" r="0.4" opacity="0.5"/><circle cx="329" cy="51" r="0.3" opacity="0.5"/><circle cx="21" cy="105" r="0.5" opacity="0.5"/><circle cx="130" cy="87" r="0.3" opacity="0.9"/><circle cx="384" cy="31" r="0.5" opacity="0.9"/><circle cx="6" cy="104" r="0.3" opacity="0.6"/><circle cx="57" cy="119" r="0.3" opacity="0.8"/><circle cx="176" cy="22" r="0.4" opacity="0.7"/><circle cx="340" cy="193" r="0.3" opacity="0.6"/><circle cx="331" cy="251" r="0.4" opacity="0.8"/><circle cx="154" cy="113" r="0.4" opacity="0.7"/><circle cx="132" cy="83" r="0.3" opacity="0.5"/><circle cx="399" cy="90" r="0.85" opacity="0.5"/><circle cx="167" cy="231" r="0.4" opacity="0.8"/><circle cx="357" cy="100" r="0.3" opacity="0.4"/><circle cx="397" cy="149" r="0.5" opacity="1.0"/><circle cx="401" cy="153" r="0.3" opacity="0.7"/><circle cx="223" cy="26" r="0.3" opacity="0.6"/><circle cx="171" cy="227" r="1.1" opacity="1.0"/><circle cx="148" cy="221" r="0.4" opacity="0.6"/><circle cx="266" cy="11" r="0.5" opacity="0.4"/><circle cx="271" cy="193" r="0.3" opacity="0.8"/><circle cx="234" cy="90" r="0.5" opacity="0.6"/><circle cx="88" cy="107" r="0.4" opacity="0.9"/><circle cx="95" cy="103" r="0.5" opacity="0.7"/><circle cx="156" cy="38" r="0.4" opacity="0.7"/><circle cx="359" cy="258" r="0.4" opacity="0.7"/><circle cx="349" cy="121" r="0.3" opacity="0.8"/><circle cx="383" cy="57" r="0.65" opacity="0.4"/><circle cx="87" cy="98" r="0.65" opacity="0.7"/><circle cx="159" cy="63" r="0.4" opacity="0.7"/><circle cx="275" cy="231" r="0.3" opacity="0.8"/><circle cx="443" cy="157" r="0.5" opacity="0.9"/><circle cx="408" cy="83" r="0.4" opacity="0.9"/><circle cx="73" cy="116" r="0.85" opacity="0.6"/><circle cx="199" cy="110" r="0.4" opacity="0.9"/><circle cx="50" cy="119" r="0.4" opacity="1.0"/><circle cx="393" cy="76" r="0.4" opacity="1.0"/><circle cx="6" cy="181" r="0.3" opacity="0.6"/><circle cx="297" cy="175" r="0.5" opacity="0.5"/><circle cx="185" cy="221" r="0.3" opacity="0.7"/><circle cx="257" cy="222" r="0.65" opacity="0.9"/><circle cx="155" cy="191" r="0.65" opacity="0.4"/><circle cx="334" cy="120" r="0.4" opacity="0.8"/><circle cx="372" cy="234" r="0.5" opacity="1.0"/><circle cx="397" cy="132" r="0.5" opacity="0.9"/><circle cx="271" cy="18" r="0.4" opacity="0.8"/><circle cx="10" cy="29" r="0.65" opacity="0.8"/><circle cx="8" cy="202" r="0.5" opacity="0.6"/><circle cx="297" cy="24" r="0.3" opacity="0.8"/><circle cx="314" cy="160" r="0.4" opacity="0.5"/><circle cx="59" cy="242" r="0.3" opacity="0.6"/><circle cx="235" cy="1" r="0.4" opacity="0.5"/><circle cx="48" cy="241" r="0.3" opacity="0.6"/><circle cx="124" cy="204" r="0.65" opacity="0.8"/><circle cx="291" cy="155" r="0.3" opacity="0.8"/><circle cx="439" cy="228" r="0.65" opacity="0.5"/><circle cx="328" cy="257" r="0.3" opacity="0.6"/><circle cx="450" cy="63" r="0.3" opacity="0.8"/><circle cx="149" cy="161" r="0.3" opacity="0.5"/><circle cx="271" cy="113" r="0.5" opacity="0.7"/><circle cx="111" cy="53" r="0.3" opacity="0.4"/><circle cx="327" cy="86" r="0.3" opacity="0.4"/><circle cx="394" cy="162" r="0.3" opacity="0.9"/><circle cx="411" cy="14" r="0.3" opacity="0.8"/><circle cx="357" cy="69" r="0.4" opacity="0.6"/><circle cx="176" cy="216" r="0.4" opacity="0.8"/><circle cx="417" cy="237" r="0.5" opacity="0.4"/><circle cx="170" cy="251" r="0.4" opacity="0.4"/><circle cx="309" cy="144" r="0.5" opacity="0.7"/><circle cx="130" cy="97" r="0.3" opacity="0.7"/><circle cx="234" cy="34" r="0.3" opacity="0.8"/><circle cx="293" cy="200" r="0.4" opacity="0.5"/><circle cx="240" cy="77" r="0.65" opacity="0.5"/><circle cx="372" cy="167" r="0.3" opacity="0.8"/><circle cx="31" cy="70" r="0.5" opacity="0.4"/><circle cx="257" cy="234" r="0.85" opacity="0.9"/><circle cx="380" cy="82" r="0.4" opacity="0.6"/><circle cx="30" cy="22" r="0.3" opacity="0.5"/><circle cx="153" cy="98" r="0.4" opacity="0.9"/><circle cx="168" cy="121" r="0.65" opacity="0.7"/><circle cx="333" cy="251" r="0.65" opacity="0.6"/><circle cx="387" cy="240" r="0.3" opacity="0.5"/><circle cx="335" cy="172" r="0.3" opacity="1.0"/><circle cx="214" cy="254" r="0.4" opacity="0.8"/><circle cx="63" cy="210" r="0.4" opacity="0.5"/><circle cx="196" cy="171" r="0.65" opacity="0.9"/><circle cx="422" cy="197" r="0.4" opacity="0.5"/><circle cx="418" cy="113" r="0.85" opacity="0.8"/><circle cx="364" cy="152" r="0.3" opacity="0.7"/><circle cx="305" cy="29" r="0.4" opacity="0.9"/><circle cx="99" cy="3" r="0.3" opacity="0.7"/><circle cx="129" cy="136" r="0.3" opacity="0.7"/><circle cx="422" cy="215" r="0.5" opacity="0.7"/><circle cx="255" cy="207" r="0.3" opacity="0.6"/><circle cx="63" cy="118" r="0.4" opacity="0.8"/><circle cx="167" cy="169" r="0.4" opacity="0.8"/><circle cx="198" cy="108" r="0.3" opacity="0.8"/><circle cx="148" cy="74" r="0.65" opacity="0.7"/><circle cx="50" cy="161" r="0.4" opacity="0.6"/><circle cx="278" cy="130" r="0.65" opacity="0.6"/><circle cx="374" cy="219" r="0.3" opacity="0.4"/><circle cx="71" cy="138" r="0.65" opacity="0.7"/><circle cx="110" cy="152" r="0.5" opacity="1.0"/><circle cx="255" cy="50" r="0.4" opacity="0.7"/><circle cx="97" cy="26" r="0.65" opacity="0.6"/><circle cx="401" cy="147" r="0.3" opacity="0.9"/><circle cx="451" cy="47" r="0.5" opacity="0.4"/><circle cx="411" cy="36" r="0.5" opacity="0.8"/><circle cx="271" cy="229" r="0.3" opacity="1.0"/><circle cx="300" cy="29" r="0.3" opacity="0.5"/><circle cx="55" cy="99" r="0.3" opacity="0.6"/><circle cx="393" cy="182" r="0.3" opacity="0.5"/><circle cx="42" cy="81" r="0.3" opacity="0.5"/><circle cx="457" cy="85" r="0.65" opacity="0.4"/><circle cx="71" cy="13" r="0.4" opacity="0.9"/><circle cx="392" cy="95" r="0.5" opacity="0.6"/><circle cx="240" cy="74" r="0.4" opacity="0.8"/><circle cx="178" cy="51" r="0.4" opacity="0.4"/><circle cx="173" cy="238" r="0.4" opacity="0.6"/><circle cx="217" cy="138" r="0.3" opacity="0.7"/><circle cx="125" cy="28" r="0.3" opacity="0.6"/><circle cx="330" cy="13" r="0.4" opacity="0.7"/><circle cx="390" cy="37" r="0.5" opacity="0.6"/><circle cx="58" cy="174" r="0.5" opacity="1.0"/><circle cx="118" cy="182" r="0.85" opacity="0.7"/><circle cx="319" cy="32" r="0.3" opacity="0.6"/><circle cx="86" cy="30" r="0.4" opacity="0.8"/><circle cx="233" cy="134" r="0.4" opacity="0.9"/><circle cx="339" cy="86" r="0.3" opacity="0.5"/><circle cx="164" cy="109" r="0.5" opacity="0.5"/><circle cx="98" cy="192" r="0.65" opacity="0.6"/><circle cx="255" cy="143" r="0.3" opacity="0.7"/><circle cx="26" cy="243" r="0.3" opacity="0.9"/><circle cx="410" cy="106" r="0.3" opacity="0.6"/><circle cx="427" cy="15" r="0.3" opacity="0.6"/><circle cx="164" cy="255" r="0.4" opacity="1.0"/><circle cx="300" cy="2" r="0.4" opacity="0.6"/><circle cx="86" cy="61" r="0.3" opacity="0.9"/><circle cx="258" cy="115" r="0.3" opacity="0.8"/><circle cx="161" cy="6" r="0.3" opacity="0.9"/><circle cx="316" cy="180" r="0.4" opacity="0.8"/><circle cx="10" cy="164" r="0.65" opacity="0.8"/><circle cx="241" cy="179" r="0.5" opacity="0.6"/><circle cx="52" cy="165" r="0.5" opacity="1.0"/><circle cx="12" cy="149" r="0.65" opacity="0.4"/><circle cx="312" cy="167" r="0.65" opacity="0.7"/><circle cx="313" cy="204" r="0.3" opacity="0.4"/><circle cx="327" cy="42" r="0.3" opacity="0.5"/><circle cx="411" cy="229" r="0.4" opacity="0.8"/><circle cx="133" cy="30" r="0.5" opacity="0.6"/><circle cx="24" cy="187" r="0.3" opacity="0.8"/><circle cx="85" cy="74" r="0.4" opacity="0.8"/><circle cx="295" cy="21" r="0.4" opacity="0.7"/><circle cx="441" cy="113" r="0.65" opacity="0.9"/><circle cx="348" cy="64" r="0.3" opacity="0.9"/><circle cx="102" cy="128" r="0.4" opacity="0.8"/><circle cx="435" cy="57" r="0.3" opacity="0.9"/><circle cx="104" cy="145" r="0.3" opacity="0.9"/><circle cx="291" cy="212" r="0.4" opacity="0.5"/><circle cx="308" cy="48" r="0.3" opacity="1.0"/><circle cx="390" cy="24" r="0.4" opacity="0.4"/><circle cx="28" cy="155" r="0.5" opacity="1.0"/><circle cx="416" cy="102" r="0.3" opacity="0.8"/><circle cx="224" cy="32" r="0.3" opacity="0.5"/><circle cx="429" cy="83" r="0.85" opacity="0.7"/><circle cx="331" cy="201" r="0.3" opacity="0.9"/><circle cx="427" cy="24" r="0.4" opacity="0.6"/><circle cx="277" cy="203" r="0.65" opacity="0.7"/><circle cx="456" cy="167" r="0.5" opacity="0.7"/><circle cx="285" cy="152" r="0.65" opacity="0.7"/><circle cx="151" cy="72" r="0.4" opacity="0.6"/><circle cx="256" cy="255" r="1.1" opacity="0.6"/><circle cx="188" cy="147" r="0.4" opacity="0.4"/><circle cx="97" cy="225" r="0.4" opacity="0.4"/><circle cx="274" cy="63" r="0.65" opacity="0.8"/><circle cx="12" cy="82" r="0.3" opacity="0.6"/><circle cx="369" cy="215" r="0.65" opacity="0.7"/><circle cx="264" cy="148" r="0.3" opacity="1.0"/><circle cx="79" cy="242" r="0.3" opacity="0.9"/><circle cx="222" cy="13" r="0.5" opacity="0.7"/><circle cx="50" cy="259" r="0.65" opacity="0.8"/><circle cx="40" cy="228" r="0.3" opacity="1.0"/><circle cx="356" cy="205" r="0.65" opacity="0.8"/><circle cx="174" cy="112" r="0.4" opacity="0.7"/><circle cx="315" cy="166" r="0.4" opacity="0.9"/><circle cx="10" cy="235" r="0.3" opacity="0.6"/><circle cx="336" cy="128" r="0.4" opacity="0.5"/><circle cx="328" cy="122" r="0.4" opacity="0.6"/><circle cx="264" cy="251" r="0.5" opacity="0.6"/><circle cx="57" cy="74" r="0.3" opacity="0.5"/><circle cx="344" cy="99" r="0.4" opacity="0.5"/><circle cx="338" cy="232" r="0.5" opacity="0.6"/><circle cx="209" cy="30" r="0.3" opacity="0.5"/><circle cx="229" cy="175" r="0.4" opacity="0.9"/><circle cx="394" cy="202" r="0.4" opacity="0.8"/><circle cx="278" cy="180" r="0.5" opacity="0.9"/><circle cx="211" cy="205" r="0.4" opacity="0.9"/><circle cx="205" cy="221" r="0.3" opacity="1.0"/><circle cx="25" cy="256" r="0.5" opacity="0.5"/><circle cx="136" cy="70" r="0.4" opacity="0.5"/><circle cx="78" cy="135" r="0.5" opacity="0.6"/><circle cx="28" cy="13" r="0.3" opacity="1.0"/><circle cx="321" cy="61" r="0.65" opacity="0.4"/><circle cx="436" cy="6" r="0.3" opacity="0.4"/><circle cx="355" cy="57" r="0.4" opacity="0.6"/><circle cx="269" cy="211" r="0.4" opacity="0.5"/><circle cx="29" cy="176" r="0.4" opacity="0.7"/><circle cx="53" cy="64" r="0.65" opacity="1.0"/><circle cx="153" cy="109" r="0.65" opacity="0.9"/><circle cx="150" cy="183" r="0.3" opacity="0.5"/><circle cx="419" cy="97" r="0.85" opacity="0.9"/><circle cx="249" cy="237" r="0.4" opacity="0.7"/><circle cx="73" cy="2" r="0.4" opacity="0.5"/><circle cx="171" cy="126" r="0.4" opacity="0.9"/><circle cx="362" cy="124" r="0.4" opacity="1.0"/><circle cx="230" cy="118" r="0.5" opacity="0.4"/><circle cx="124" cy="52" r="0.4" opacity="0.4"/><circle cx="353" cy="198" r="0.4" opacity="0.9"/><circle cx="223" cy="98" r="0.3" opacity="0.6"/><circle cx="163" cy="186" r="0.65" opacity="0.5"/><circle cx="238" cy="137" r="0.4" opacity="0.7"/><circle cx="445" cy="102" r="0.4" opacity="0.7"/><circle cx="414" cy="159" r="1.1" opacity="0.6"/><circle cx="361" cy="214" r="0.65" opacity="1.0"/><circle cx="246" cy="71" r="0.4" opacity="0.8"/><circle cx="47" cy="183" r="0.5" opacity="0.6"/><circle cx="139" cy="180" r="0.3" opacity="0.9"/><circle cx="337" cy="134" r="0.4" opacity="0.6"/><circle cx="374" cy="62" r="0.5" opacity="0.4"/><circle cx="17" cy="239" r="0.3" opacity="0.4"/><circle cx="346" cy="138" r="0.3" opacity="0.9"/><circle cx="50" cy="117" r="0.5" opacity="0.9"/><circle cx="315" cy="130" r="0.3" opacity="0.5"/><circle cx="256" cy="132" r="0.3" opacity="1.0"/><circle cx="348" cy="240" r="0.3" opacity="1.0"/><circle cx="438" cy="138" r="0.85" opacity="1.0"/><circle cx="428" cy="62" r="0.3" opacity="0.4"/><circle cx="409" cy="36" r="0.4" opacity="0.4"/><circle cx="358" cy="225" r="0.65" opacity="0.6"/><circle cx="89" cy="181" r="0.4" opacity="0.5"/><circle cx="283" cy="101" r="0.5" opacity="0.8"/><circle cx="170" cy="50" r="0.3" opacity="1.0"/><circle cx="1" cy="159" r="0.5" opacity="1.0"/><circle cx="301" cy="255" r="0.85" opacity="0.8"/><circle cx="230" cy="21" r="0.4" opacity="0.4"/><circle cx="257" cy="99" r="0.65" opacity="0.9"/><circle cx="247" cy="36" r="0.4" opacity="0.9"/><circle cx="401" cy="65" r="0.3" opacity="0.8"/><circle cx="139" cy="12" r="0.3" opacity="0.7"/><circle cx="84" cy="193" r="0.5" opacity="0.7"/><circle cx="189" cy="95" r="0.4" opacity="0.6"/><circle cx="330" cy="67" r="0.4" opacity="0.7"/><circle cx="202" cy="25" r="0.65" opacity="0.6"/><circle cx="129" cy="207" r="0.65" opacity="0.8"/><circle cx="392" cy="14" r="0.3" opacity="0.9"/><circle cx="329" cy="73" r="0.85" opacity="0.9"/><circle cx="393" cy="100" r="0.65" opacity="0.4"/><circle cx="184" cy="250" r="1.1" opacity="0.5"/><circle cx="124" cy="74" r="0.65" opacity="0.7"/><circle cx="450" cy="210" r="0.3" opacity="0.7"/><circle cx="88" cy="44" r="0.3" opacity="0.7"/><circle cx="453" cy="212" r="0.4" opacity="0.6"/><circle cx="191" cy="71" r="0.5" opacity="0.6"/><circle cx="185" cy="70" r="0.3" opacity="1.0"/><circle cx="11" cy="254" r="0.5" opacity="0.8"/><circle cx="316" cy="189" r="0.3" opacity="0.4"/><circle cx="446" cy="150" r="0.5" opacity="0.9"/><circle cx="108" cy="14" r="0.65" opacity="0.8"/><circle cx="214" cy="26" r="0.5" opacity="0.4"/><circle cx="361" cy="244" r="0.4" opacity="0.6"/><circle cx="370" cy="25" r="0.3" opacity="0.9"/><circle cx="132" cy="165" r="0.4" opacity="0.8"/><circle cx="101" cy="81" r="0.4" opacity="1.0"/><circle cx="65" cy="176" r="0.5" opacity="1.0"/><circle cx="64" cy="31" r="0.4" opacity="0.9"/><circle cx="294" cy="183" r="0.4" opacity="0.9"/><circle cx="230" cy="167" r="0.3" opacity="0.8"/><circle cx="54" cy="47" r="0.85" opacity="0.5"/><circle cx="414" cy="232" r="0.3" opacity="0.8"/><circle cx="16" cy="22" r="0.5" opacity="0.4"/><circle cx="309" cy="235" r="0.3" opacity="1.0"/><circle cx="301" cy="7" r="0.3" opacity="0.6"/><circle cx="101" cy="115" r="0.3" opacity="0.8"/><circle cx="341" cy="103" r="0.3" opacity="0.8"/><circle cx="156" cy="74" r="0.5" opacity="0.8"/><circle cx="40" cy="192" r="0.65" opacity="0.8"/><circle cx="141" cy="64" r="0.4" opacity="0.7"/><circle cx="257" cy="236" r="0.3" opacity="0.7"/><circle cx="289" cy="151" r="0.5" opacity="0.9"/><circle cx="212" cy="3" r="0.4" opacity="0.7"/><circle cx="35" cy="213" r="0.4" opacity="0.4"/><circle cx="275" cy="136" r="0.3" opacity="0.8"/><circle cx="150" cy="236" r="0.3" opacity="0.7"/><circle cx="237" cy="103" r="0.4" opacity="0.8"/><circle cx="372" cy="93" r="0.5" opacity="0.6"/><circle cx="200" cy="9" r="0.4" opacity="0.8"/><circle cx="375" cy="133" r="0.65" opacity="0.8"/><circle cx="223" cy="122" r="0.5" opacity="0.6"/><circle cx="98" cy="208" r="0.3" opacity="0.9"/><circle cx="308" cy="230" r="0.5" opacity="0.6"/><circle cx="291" cy="141" r="0.5" opacity="0.8"/><circle cx="213" cy="137" r="0.3" opacity="0.6"/><circle cx="18" cy="110" r="0.5" opacity="0.9"/><circle cx="304" cy="87" r="0.3" opacity="0.9"/><circle cx="435" cy="170" r="0.65" opacity="0.4"/><circle cx="391" cy="156" r="0.4" opacity="0.8"/><circle cx="13" cy="243" r="0.3" opacity="0.9"/><circle cx="34" cy="250" r="0.85" opacity="0.7"/><circle cx="351" cy="106" r="0.3" opacity="0.8"/><circle cx="221" cy="174" r="0.4" opacity="1.0"/><circle cx="181" cy="62" r="0.5" opacity="0.8"/><circle cx="242" cy="10" r="0.3" opacity="0.5"/><circle cx="444" cy="244" r="0.3" opacity="0.6"/><circle cx="125" cy="34" r="0.65" opacity="0.5"/><circle cx="350" cy="121" r="0.4" opacity="0.9"/><circle cx="193" cy="46" r="0.4" opacity="0.9"/><circle cx="83" cy="51" r="0.3" opacity="0.5"/><circle cx="327" cy="41" r="0.4" opacity="0.6"/><circle cx="171" cy="66" r="0.85" opacity="0.6"/><circle cx="438" cy="110" r="0.5" opacity="0.8"/><circle cx="4" cy="59" r="0.3" opacity="0.9"/><circle cx="235" cy="217" r="0.3" opacity="0.9"/><circle cx="41" cy="130" r="0.5" opacity="0.9"/><circle cx="173" cy="81" r="0.5" opacity="1.0"/><circle cx="150" cy="5" r="0.3" opacity="0.7"/><circle cx="159" cy="104" r="0.3" opacity="0.6"/><circle cx="279" cy="116" r="0.3" opacity="0.4"/><circle cx="192" cy="152" r="0.3" opacity="0.8"/><circle cx="301" cy="35" r="0.4" opacity="0.6"/><circle cx="269" cy="252" r="0.4" opacity="0.4"/><circle cx="252" cy="236" r="0.3" opacity="0.4"/><circle cx="187" cy="226" r="0.5" opacity="0.6"/><circle cx="421" cy="104" r="0.3" opacity="0.6"/><circle cx="29" cy="13" r="0.4" opacity="0.7"/><circle cx="197" cy="247" r="0.4" opacity="0.8"/><circle cx="8" cy="233" r="0.4" opacity="0.8"/><circle cx="56" cy="143" r="0.3" opacity="0.9"/><circle cx="189" cy="249" r="0.65" opacity="0.5"/><circle cx="122" cy="199" r="0.4" opacity="0.5"/><circle cx="12" cy="219" r="0.5" opacity="0.6"/><circle cx="455" cy="55" r="0.3" opacity="0.6"/><circle cx="80" cy="4" r="0.3" opacity="0.9"/><circle cx="86" cy="119" r="0.65" opacity="0.4"/><circle cx="254" cy="206" r="0.3" opacity="0.9"/><circle cx="301" cy="95" r="0.85" opacity="0.8"/><circle cx="415" cy="216" r="0.3" opacity="0.5"/><circle cx="19" cy="33" r="0.3" opacity="0.9"/><circle cx="95" cy="169" r="0.3" opacity="0.5"/><circle cx="45" cy="44" r="0.4" opacity="0.7"/><circle cx="97" cy="245" r="0.65" opacity="0.5"/><circle cx="289" cy="97" r="0.5" opacity="0.5"/><circle cx="134" cy="44" r="0.4" opacity="0.7"/><circle cx="182" cy="219" r="0.65" opacity="0.5"/><circle cx="42" cy="153" r="0.4" opacity="0.5"/><circle cx="285" cy="195" r="0.4" opacity="0.9"/><circle cx="63" cy="222" r="0.5" opacity="0.7"/><circle cx="329" cy="147" r="0.4" opacity="0.5"/><circle cx="272" cy="157" r="0.65" opacity="0.6"/><circle cx="224" cy="48" r="0.4" opacity="0.8"/><circle cx="125" cy="46" r="0.65" opacity="0.6"/><circle cx="159" cy="154" r="0.65" opacity="0.9"/><circle cx="296" cy="224" r="0.3" opacity="0.6"/><circle cx="365" cy="94" r="0.4" opacity="1.0"/><circle cx="164" cy="76" r="0.3" opacity="0.7"/><circle cx="85" cy="254" r="0.65" opacity="0.7"/><circle cx="217" cy="61" r="0.85" opacity="0.4"/><circle cx="7" cy="28" r="0.3" opacity="0.5"/><circle cx="387" cy="55" r="0.5" opacity="0.8"/><circle cx="333" cy="3" r="0.65" opacity="0.7"/><circle cx="42" cy="198" r="0.5" opacity="0.6"/><circle cx="336" cy="115" r="0.4" opacity="0.7"/><circle cx="363" cy="213" r="0.4" opacity="0.9"/><circle cx="379" cy="181" r="0.5" opacity="0.7"/><circle cx="268" cy="204" r="0.5" opacity="0.7"/><circle cx="10" cy="141" r="0.4" opacity="0.6"/><circle cx="163" cy="119" r="0.4" opacity="0.9"/><circle cx="341" cy="102" r="0.65" opacity="0.6"/><circle cx="293" cy="182" r="0.4" opacity="0.8"/><circle cx="423" cy="186" r="0.4" opacity="0.5"/><circle cx="326" cy="156" r="0.4" opacity="0.4"/><circle cx="15" cy="30" r="0.3" opacity="1.0"/><circle cx="197" cy="231" r="0.4" opacity="0.9"/><circle cx="16" cy="49" r="0.5" opacity="0.7"/><circle cx="136" cy="23" r="0.65" opacity="0.7"/><circle cx="250" cy="136" r="0.65" opacity="0.5"/><circle cx="131" cy="87" r="0.4" opacity="0.5"/><circle cx="144" cy="23" r="0.5" opacity="0.4"/><circle cx="50" cy="32" r="0.65" opacity="0.5"/><circle cx="174" cy="151" r="0.5" opacity="0.7"/><circle cx="218" cy="26" r="0.3" opacity="1.0"/><circle cx="238" cy="194" r="0.3" opacity="0.8"/><circle cx="351" cy="141" r="0.85" opacity="1.0"/><circle cx="69" cy="64" r="0.4" opacity="0.5"/><circle cx="235" cy="69" r="0.3" opacity="0.5"/><circle cx="17" cy="72" r="0.4" opacity="0.8"/><circle cx="29" cy="219" r="0.5" opacity="0.8"/><circle cx="206" cy="26" r="0.3" opacity="0.6"/><circle cx="294" cy="258" r="0.3" opacity="0.9"/><circle cx="418" cy="207" r="0.3" opacity="0.8"/><circle cx="356" cy="211" r="0.65" opacity="1.0"/><circle cx="360" cy="112" r="0.3" opacity="0.5"/><circle cx="172" cy="209" r="0.3" opacity="1.0"/><circle cx="367" cy="33" r="0.65" opacity="0.8"/><circle cx="114" cy="124" r="0.4" opacity="0.6"/><circle cx="225" cy="19" r="0.4" opacity="0.9"/><circle cx="317" cy="240" r="0.4" opacity="0.7"/><circle cx="155" cy="237" r="0.5" opacity="0.8"/><circle cx="128" cy="175" r="0.65" opacity="0.7"/><circle cx="29" cy="91" r="0.4" opacity="0.4"/><circle cx="64" cy="80" r="0.5" opacity="1.0"/><circle cx="446" cy="139" r="0.65" opacity="0.8"/><circle cx="112" cy="159" r="0.4" opacity="1.0"/><circle cx="149" cy="6" r="0.3" opacity="0.8"/><circle cx="266" cy="122" r="0.65" opacity="0.8"/><circle cx="330" cy="74" r="0.5" opacity="0.8"/><circle cx="36" cy="10" r="0.4" opacity="0.8"/><circle cx="112" cy="73" r="0.3" opacity="0.8"/><circle cx="418" cy="13" r="0.4" opacity="0.6"/><circle cx="217" cy="17" r="0.5" opacity="0.8"/><circle cx="262" cy="13" r="0.3" opacity="0.6"/><circle cx="27" cy="66" r="0.5" opacity="1.0"/><circle cx="31" cy="38" r="0.4" opacity="0.8"/><circle cx="67" cy="112" r="0.3" opacity="1.0"/><circle cx="211" cy="130" r="0.3" opacity="0.5"/><circle cx="253" cy="49" r="0.3" opacity="0.4"/><circle cx="67" cy="150" r="0.4" opacity="0.6"/><circle cx="171" cy="21" r="0.3" opacity="0.9"/><circle cx="248" cy="211" r="0.3" opacity="1.0"/><circle cx="445" cy="38" r="0.4" opacity="0.9"/><circle cx="102" cy="145" r="0.5" opacity="0.4"/><circle cx="225" cy="229" r="0.5" opacity="0.9"/><circle cx="382" cy="124" r="0.3" opacity="0.9"/><circle cx="421" cy="192" r="0.5" opacity="0.8"/><circle cx="187" cy="72" r="0.3" opacity="0.8"/><circle cx="344" cy="229" r="0.5" opacity="0.9"/><circle cx="168" cy="45" r="0.4" opacity="0.6"/><circle cx="141" cy="157" r="0.4" opacity="0.5"/><circle cx="418" cy="192" r="0.5" opacity="0.4"/><circle cx="275" cy="252" r="0.3" opacity="1.0"/><circle cx="51" cy="130" r="0.3" opacity="0.9"/><circle cx="179" cy="229" r="0.4" opacity="0.4"/><circle cx="252" cy="35" r="0.4" opacity="0.6"/><circle cx="63" cy="84" r="0.5" opacity="0.6"/><circle cx="446" cy="248" r="0.3" opacity="0.8"/><circle cx="347" cy="56" r="0.3" opacity="0.5"/><circle cx="363" cy="26" r="0.4" opacity="0.8"/><circle cx="9" cy="176" r="0.5" opacity="0.7"/><circle cx="190" cy="181" r="0.4" opacity="0.7"/><circle cx="457" cy="207" r="0.4" opacity="0.7"/><circle cx="3" cy="98" r="0.3" opacity="0.5"/><circle cx="204" cy="225" r="0.65" opacity="0.5"/><circle cx="57" cy="5" r="0.4" opacity="0.9"/><circle cx="441" cy="202" r="1.1" opacity="0.8"/><circle cx="187" cy="69" r="0.4" opacity="1.0"/><circle cx="147" cy="45" r="0.85" opacity="0.8"/><circle cx="339" cy="152" r="0.85" opacity="0.4"/><circle cx="211" cy="229" r="0.4" opacity="0.6"/><circle cx="401" cy="73" r="0.65" opacity="0.8"/><circle cx="357" cy="204" r="0.3" opacity="0.6"/><circle cx="154" cy="248" r="0.65" opacity="0.8"/><circle cx="25" cy="100" r="0.3" opacity="0.8"/><circle cx="407" cy="79" r="0.4" opacity="0.6"/><circle cx="10" cy="151" r="0.3" opacity="1.0"/><circle cx="154" cy="184" r="0.5" opacity="0.8"/><circle cx="190" cy="6" r="0.3" opacity="0.7"/><circle cx="301" cy="71" r="0.5" opacity="0.7"/><circle cx="323" cy="234" r="0.4" opacity="1.0"/><circle cx="19" cy="78" r="0.3" opacity="0.8"/><circle cx="26" cy="113" r="0.3" opacity="0.9"/><circle cx="281" cy="196" r="0.4" opacity="0.5"/><circle cx="115" cy="166" r="0.65" opacity="0.7"/><circle cx="158" cy="103" r="0.5" opacity="1.0"/><circle cx="300" cy="23" r="0.4" opacity="0.7"/><circle cx="151" cy="114" r="0.4" opacity="0.4"/><circle cx="161" cy="236" r="0.3" opacity="0.9"/><circle cx="89" cy="170" r="0.3" opacity="0.7"/><circle cx="164" cy="160" r="0.3" opacity="0.8"/><circle cx="314" cy="64" r="0.3" opacity="1.0"/><circle cx="218" cy="84" r="0.5" opacity="0.5"/><circle cx="444" cy="188" r="0.3" opacity="0.4"/><circle cx="190" cy="29" r="0.4" opacity="0.9"/><circle cx="205" cy="147" r="0.3" opacity="0.6"/><circle cx="395" cy="168" r="0.3" opacity="0.6"/><circle cx="159" cy="27" r="0.4" opacity="0.9"/><circle cx="370" cy="242" r="0.3" opacity="0.8"/><circle cx="267" cy="78" r="0.3" opacity="0.4"/><circle cx="94" cy="135" r="0.4" opacity="0.5"/><circle cx="367" cy="175" r="0.3" opacity="0.4"/><circle cx="281" cy="177" r="0.5" opacity="0.9"/><circle cx="183" cy="240" r="0.3" opacity="0.8"/><circle cx="76" cy="233" r="0.3" opacity="0.9"/><circle cx="360" cy="34" r="0.5" opacity="0.9"/><circle cx="336" cy="152" r="0.3" opacity="0.9"/><circle cx="117" cy="51" r="0.5" opacity="0.6"/><circle cx="51" cy="32" r="0.65" opacity="0.5"/><circle cx="96" cy="187" r="0.5" opacity="0.4"/><circle cx="294" cy="128" r="0.4" opacity="0.8"/><circle cx="96" cy="61" r="0.4" opacity="0.7"/><circle cx="295" cy="21" r="0.3" opacity="0.9"/><circle cx="287" cy="125" r="0.65" opacity="0.7"/><circle cx="122" cy="105" r="0.3" opacity="0.7"/><circle cx="356" cy="31" r="0.4" opacity="0.7"/><circle cx="127" cy="53" r="0.5" opacity="0.5"/><circle cx="36" cy="245" r="0.5" opacity="0.9"/><circle cx="22" cy="76" r="0.4" opacity="0.9"/><circle cx="18" cy="209" r="0.4" opacity="1.0"/><circle cx="229" cy="4" r="0.4" opacity="0.9"/><circle cx="198" cy="138" r="0.4" opacity="0.7"/><circle cx="43" cy="51" r="0.65" opacity="0.8"/><circle cx="172" cy="29" r="0.65" opacity="0.5"/><circle cx="84" cy="171" r="0.4" opacity="0.6"/><circle cx="135" cy="75" r="0.85" opacity="0.9"/><circle cx="459" cy="109" r="0.3" opacity="0.7"/><circle cx="180" cy="147" r="0.5" opacity="0.9"/><circle cx="214" cy="15" r="0.5" opacity="0.9"/><circle cx="68" cy="138" r="0.5" opacity="0.5"/><circle cx="210" cy="122" r="0.4" opacity="0.5"/><circle cx="96" cy="139" r="0.3" opacity="0.4"/><circle cx="452" cy="181" r="0.3" opacity="0.9"/><circle cx="376" cy="234" r="0.65" opacity="0.7"/><circle cx="103" cy="128" r="0.4" opacity="0.8"/><circle cx="157" cy="182" r="0.4" opacity="0.5"/><circle cx="102" cy="27" r="0.3" opacity="0.8"/><circle cx="437" cy="27" r="0.4" opacity="0.8"/><circle cx="120" cy="246" r="0.3" opacity="0.9"/><circle cx="315" cy="252" r="0.4" opacity="0.9"/><circle cx="71" cy="118" r="0.65" opacity="0.6"/><circle cx="204" cy="146" r="0.5" opacity="0.9"/><circle cx="223" cy="107" r="0.4" opacity="0.4"/><circle cx="394" cy="15" r="0.4" opacity="0.4"/><circle cx="329" cy="80" r="0.3" opacity="0.6"/><circle cx="179" cy="222" r="0.65" opacity="0.5"/><circle cx="120" cy="214" r="0.5" opacity="0.4"/><circle cx="216" cy="4" r="0.3" opacity="0.5"/><circle cx="102" cy="27" r="0.4" opacity="0.5"/><circle cx="426" cy="140" r="0.5" opacity="0.5"/><circle cx="70" cy="115" r="0.5" opacity="0.8"/><circle cx="8" cy="18" r="0.4" opacity="0.7"/><circle cx="238" cy="194" r="0.4" opacity="0.5"/><circle cx="365" cy="138" r="0.3" opacity="0.7"/><circle cx="250" cy="34" r="0.4" opacity="0.9"/><circle cx="292" cy="212" r="0.5" opacity="0.8"/><circle cx="384" cy="197" r="0.4" opacity="0.7"/><circle cx="266" cy="32" r="0.3" opacity="0.4"/><circle cx="69" cy="139" r="0.3" opacity="0.6"/><circle cx="174" cy="28" r="0.5" opacity="1.0"/><circle cx="187" cy="84" r="0.3" opacity="0.6"/><circle cx="410" cy="224" r="0.65" opacity="0.8"/><circle cx="7" cy="109" r="0.4" opacity="0.6"/><circle cx="408" cy="182" r="0.5" opacity="0.5"/><circle cx="246" cy="219" r="0.4" opacity="0.7"/><circle cx="14" cy="159" r="0.4" opacity="0.7"/><circle cx="305" cy="156" r="0.4" opacity="0.9"/><circle cx="11" cy="10" r="0.3" opacity="0.5"/><circle cx="185" cy="109" r="0.3" opacity="0.9"/><circle cx="294" cy="44" r="0.65" opacity="0.7"/><circle cx="403" cy="61" r="0.5" opacity="0.6"/><circle cx="334" cy="242" r="0.85" opacity="0.7"/><circle cx="54" cy="202" r="0.85" opacity="0.6"/><circle cx="151" cy="116" r="0.3" opacity="0.6"/><circle cx="157" cy="139" r="0.4" opacity="0.8"/><circle cx="241" cy="215" r="0.3" opacity="1.0"/><circle cx="23" cy="210" r="0.5" opacity="0.9"/><circle cx="259" cy="52" r="0.4" opacity="0.9"/><circle cx="184" cy="32" r="0.4" opacity="0.7"/><circle cx="27" cy="56" r="0.4" opacity="0.4"/><circle cx="140" cy="7" r="0.3" opacity="0.9"/><circle cx="21" cy="137" r="0.3" opacity="0.8"/><circle cx="104" cy="163" r="0.5" opacity="0.7"/><circle cx="117" cy="12" r="0.5" opacity="0.8"/><circle cx="115" cy="20" r="0.3" opacity="0.9"/><circle cx="323" cy="98" r="0.5" opacity="0.7"/><circle cx="416" cy="94" r="0.3" opacity="0.6"/><circle cx="340" cy="2" r="0.5" opacity="0.8"/><circle cx="137" cy="151" r="0.5" opacity="0.4"/><circle cx="120" cy="38" r="0.4" opacity="0.8"/><circle cx="111" cy="226" r="0.3" opacity="0.5"/><circle cx="438" cy="154" r="0.65" opacity="0.9"/><circle cx="170" cy="159" r="0.85" opacity="0.8"/><circle cx="55" cy="34" r="0.5" opacity="0.6"/><circle cx="269" cy="26" r="0.3" opacity="0.5"/><circle cx="270" cy="243" r="0.5" opacity="0.9"/><circle cx="229" cy="161" r="0.4" opacity="0.4"/><circle cx="103" cy="178" r="0.85" opacity="0.9"/><circle cx="121" cy="157" r="0.3" opacity="0.6"/><circle cx="28" cy="232" r="0.3" opacity="0.6"/><circle cx="439" cy="93" r="0.3" opacity="0.7"/><circle cx="212" cy="40" r="0.5" opacity="0.5"/><circle cx="25" cy="100" r="0.3" opacity="0.9"/><circle cx="187" cy="233" r="0.4" opacity="0.7"/><circle cx="373" cy="119" r="0.3" opacity="0.9"/><circle cx="393" cy="183" r="0.85" opacity="0.7"/><circle cx="364" cy="14" r="0.3" opacity="0.8"/><circle cx="339" cy="17" r="0.4" opacity="0.5"/><circle cx="65" cy="144" r="0.4" opacity="0.9"/><circle cx="67" cy="183" r="0.3" opacity="0.9"/><circle cx="216" cy="111" r="0.3" opacity="1.0"/><circle cx="216" cy="132" r="0.4" opacity="0.7"/><circle cx="88" cy="119" r="0.4" opacity="0.6"/><circle cx="328" cy="4" r="0.4" opacity="0.4"/><circle cx="249" cy="109" r="0.65" opacity="0.8"/><circle cx="214" cy="36" r="0.4" opacity="0.6"/><circle cx="219" cy="247" r="0.4" opacity="0.7"/><circle cx="22" cy="76" r="0.3" opacity="0.5"/><circle cx="277" cy="131" r="0.4" opacity="0.5"/><circle cx="61" cy="214" r="0.4" opacity="0.4"/><circle cx="207" cy="95" r="0.3" opacity="0.8"/><circle cx="346" cy="202" r="0.65" opacity="0.8"/><circle cx="354" cy="211" r="0.3" opacity="0.6"/><circle cx="307" cy="234" r="0.5" opacity="0.7"/><circle cx="34" cy="202" r="0.3" opacity="0.7"/><circle cx="162" cy="208" r="0.5" opacity="0.9"/><circle cx="358" cy="201" r="0.4" opacity="0.7"/><circle cx="80" cy="34" r="0.85" opacity="0.5"/><circle cx="161" cy="251" r="0.3" opacity="0.7"/><circle cx="444" cy="238" r="0.3" opacity="0.5"/><circle cx="407" cy="152" r="0.3" opacity="0.7"/><circle cx="40" cy="160" r="0.3" opacity="0.9"/><circle cx="401" cy="222" r="0.4" opacity="0.8"/><circle cx="173" cy="36" r="0.65" opacity="0.9"/><circle cx="375" cy="125" r="0.65" opacity="0.5"/><circle cx="265" cy="67" r="0.4" opacity="1.0"/><circle cx="197" cy="76" r="0.3" opacity="0.9"/><circle cx="201" cy="211" r="0.65" opacity="0.5"/><circle cx="398" cy="25" r="0.3" opacity="0.8"/><circle cx="17" cy="129" r="0.85" opacity="0.6"/><circle cx="9" cy="207" r="0.5" opacity="0.5"/><circle cx="66" cy="115" r="0.4" opacity="0.7"/><circle cx="73" cy="10" r="0.3" opacity="0.8"/><circle cx="394" cy="3" r="0.4" opacity="0.7"/><circle cx="246" cy="50" r="0.5" opacity="0.5"/><circle cx="67" cy="16" r="0.3" opacity="0.5"/><circle cx="218" cy="250" r="0.5" opacity="0.6"/><circle cx="256" cy="143" r="0.65" opacity="1.0"/><circle cx="40" cy="10" r="0.65" opacity="0.8"/><circle cx="105" cy="75" r="0.4" opacity="0.9"/><circle cx="167" cy="202" r="0.5" opacity="0.5"/><circle cx="197" cy="113" r="0.4" opacity="0.5"/><circle cx="155" cy="7" r="0.3" opacity="0.6"/><circle cx="235" cy="188" r="0.3" opacity="0.6"/><circle cx="182" cy="219" r="0.5" opacity="0.9"/><circle cx="213" cy="63" r="0.3" opacity="0.6"/><circle cx="32" cy="228" r="0.4" opacity="0.5"/><circle cx="100" cy="101" r="0.4" opacity="0.4"/><circle cx="445" cy="107" r="0.85" opacity="0.8"/><circle cx="365" cy="215" r="0.4" opacity="0.7"/><circle cx="82" cy="34" r="0.5" opacity="0.6"/><circle cx="147" cy="81" r="0.65" opacity="0.9"/><circle cx="165" cy="128" r="0.3" opacity="0.8"/><circle cx="281" cy="10" r="0.65" opacity="0.6"/><circle cx="84" cy="68" r="0.65" opacity="0.8"/><circle cx="132" cy="148" r="0.65" opacity="0.7"/><circle cx="314" cy="45" r="0.85" opacity="0.9"/><circle cx="31" cy="75" r="0.65" opacity="0.6"/><circle cx="425" cy="87" r="0.3" opacity="0.9"/><circle cx="155" cy="239" r="0.5" opacity="0.8"/><circle cx="399" cy="77" r="0.4" opacity="0.8"/><circle cx="68" cy="51" r="0.3" opacity="0.6"/><circle cx="133" cy="243" r="0.3" opacity="0.8"/><circle cx="141" cy="142" r="0.4" opacity="0.7"/><circle cx="37" cy="124" r="0.5" opacity="0.9"/><circle cx="222" cy="176" r="0.5" opacity="0.5"/><circle cx="354" cy="196" r="0.5" opacity="0.7"/><circle cx="398" cy="252" r="0.65" opacity="0.9"/><circle cx="166" cy="22" r="0.65" opacity="0.8"/><circle cx="384" cy="50" r="0.65" opacity="0.6"/><circle cx="275" cy="37" r="0.4" opacity="0.7"/><circle cx="189" cy="230" r="0.3" opacity="0.8"/><circle cx="395" cy="228" r="0.3" opacity="0.5"/><circle cx="8" cy="147" r="0.3" opacity="0.5"/><circle cx="409" cy="18" r="0.65" opacity="0.6"/><circle cx="23" cy="63" r="0.5" opacity="0.7"/><circle cx="25" cy="125" r="0.4" opacity="0.6"/><circle cx="59" cy="23" r="0.65" opacity="0.9"/><circle cx="324" cy="201" r="0.4" opacity="0.8"/><circle cx="376" cy="187" r="0.3" opacity="0.9"/><circle cx="338" cy="73" r="0.4" opacity="0.7"/><circle cx="403" cy="179" r="0.5" opacity="0.6"/><circle cx="436" cy="222" r="0.5" opacity="0.9"/><circle cx="391" cy="157" r="0.4" opacity="0.7"/><circle cx="44" cy="53" r="0.4" opacity="0.8"/><circle cx="447" cy="123" r="0.65" opacity="0.8"/><circle cx="297" cy="239" r="0.5" opacity="0.6"/><circle cx="424" cy="71" r="0.3" opacity="0.6"/><circle cx="204" cy="234" r="0.4" opacity="0.8"/><circle cx="382" cy="38" r="0.65" opacity="0.6"/><circle cx="142" cy="40" r="0.5" opacity="0.4"/><circle cx="360" cy="208" r="0.3" opacity="0.5"/><circle cx="340" cy="103" r="0.3" opacity="0.9"/><circle cx="443" cy="96" r="0.3" opacity="0.4"/><circle cx="318" cy="234" r="0.3" opacity="0.7"/><circle cx="161" cy="82" r="0.3" opacity="0.9"/><circle cx="231" cy="190" r="1.1" opacity="0.6"/><circle cx="452" cy="185" r="0.5" opacity="0.9"/><circle cx="216" cy="123" r="0.5" opacity="0.6"/><circle cx="171" cy="230" r="0.3" opacity="0.7"/><circle cx="171" cy="53" r="0.65" opacity="0.5"/><circle cx="331" cy="93" r="0.3" opacity="0.6"/><circle cx="55" cy="105" r="0.3" opacity="0.6"/><circle cx="408" cy="104" r="0.3" opacity="0.8"/><circle cx="294" cy="203" r="0.85" opacity="0.7"/><circle cx="307" cy="229" r="0.5" opacity="0.8"/><circle cx="235" cy="142" r="0.5" opacity="0.4"/><circle cx="363" cy="256" r="0.3" opacity="0.6"/><circle cx="337" cy="158" r="0.4" opacity="1.0"/><circle cx="397" cy="251" r="0.65" opacity="0.9"/><circle cx="104" cy="89" r="1.1" opacity="0.8"/><circle cx="4" cy="43" r="0.5" opacity="0.6"/><circle cx="274" cy="168" r="0.4" opacity="1.0"/><circle cx="64" cy="133" r="0.3" opacity="0.7"/><circle cx="129" cy="63" r="0.5" opacity="0.5"/><circle cx="81" cy="117" r="0.3" opacity="0.4"/><circle cx="309" cy="7" r="0.4" opacity="0.6"/><circle cx="71" cy="97" r="0.3" opacity="0.4"/><circle cx="97" cy="91" r="0.65" opacity="0.6"/><circle cx="178" cy="242" r="0.5" opacity="0.6"/><circle cx="231" cy="72" r="0.5" opacity="0.8"/><circle cx="112" cy="161" r="0.3" opacity="0.4"/><circle cx="197" cy="197" r="0.4" opacity="0.5"/><circle cx="368" cy="217" r="0.3" opacity="0.8"/><circle cx="402" cy="259" r="0.85" opacity="0.8"/><circle cx="71" cy="148" r="0.3" opacity="0.9"/><circle cx="438" cy="130" r="0.4" opacity="1.0"/><circle cx="170" cy="243" r="0.3" opacity="0.7"/><circle cx="235" cy="10" r="0.3" opacity="0.6"/><circle cx="269" cy="37" r="0.3" opacity="0.6"/><circle cx="238" cy="152" r="0.3" opacity="0.8"/><circle cx="402" cy="200" r="0.4" opacity="0.5"/><circle cx="183" cy="1" r="0.4" opacity="0.9"/><circle cx="197" cy="65" r="0.4" opacity="0.6"/><circle cx="192" cy="180" r="0.4" opacity="1.0"/><circle cx="3" cy="6" r="0.4" opacity="0.6"/><circle cx="375" cy="51" r="0.85" opacity="0.6"/><circle cx="311" cy="77" r="0.65" opacity="0.5"/><circle cx="259" cy="76" r="0.5" opacity="0.5"/><circle cx="210" cy="15" r="0.5" opacity="0.6"/><circle cx="374" cy="24" r="0.3" opacity="0.5"/><circle cx="400" cy="49" r="0.4" opacity="0.6"/><circle cx="379" cy="137" r="0.4" opacity="0.8"/><circle cx="176" cy="42" r="0.4" opacity="0.5"/><circle cx="243" cy="104" r="0.65" opacity="1.0"/><circle cx="298" cy="90" r="0.3" opacity="0.8"/><circle cx="364" cy="29" r="0.4" opacity="0.8"/><circle cx="98" cy="145" r="0.4" opacity="0.4"/><circle cx="446" cy="140" r="0.4" opacity="0.9"/><circle cx="441" cy="204" r="0.4" opacity="0.7"/><circle cx="252" cy="190" r="0.5" opacity="0.8"/><circle cx="255" cy="221" r="0.4" opacity="0.9"/><circle cx="203" cy="251" r="0.85" opacity="0.6"/><circle cx="144" cy="73" r="0.65" opacity="0.8"/><circle cx="429" cy="40" r="0.4" opacity="0.6"/><circle cx="217" cy="81" r="0.65" opacity="0.5"/><circle cx="279" cy="243" r="0.65" opacity="1.0"/><circle cx="162" cy="220" r="0.3" opacity="1.0"/><circle cx="394" cy="136" r="0.4" opacity="0.6"/><circle cx="32" cy="171" r="0.3" opacity="0.7"/><circle cx="101" cy="116" r="0.65" opacity="0.7"/><circle cx="140" cy="81" r="0.5" opacity="0.5"/><circle cx="432" cy="2" r="0.4" opacity="0.5"/><circle cx="347" cy="40" r="0.3" opacity="0.9"/><circle cx="363" cy="97" r="0.4" opacity="0.5"/><circle cx="442" cy="62" r="0.4" opacity="1.0"/><circle cx="258" cy="119" r="0.3" opacity="0.5"/><circle cx="159" cy="224" r="0.3" opacity="0.8"/><circle cx="36" cy="1" r="0.3" opacity="0.4"/><circle cx="147" cy="159" r="0.3" opacity="0.9"/><circle cx="458" cy="176" r="0.65" opacity="0.6"/><circle cx="105" cy="168" r="0.4" opacity="0.9"/><circle cx="319" cy="75" r="0.5" opacity="0.5"/><circle cx="456" cy="67" r="0.5" opacity="0.6"/><circle cx="101" cy="27" r="0.4" opacity="0.7"/><circle cx="400" cy="205" r="0.65" opacity="0.6"/><circle cx="340" cy="213" r="0.3" opacity="1.0"/><circle cx="445" cy="41" r="0.5" opacity="0.6"/><circle cx="137" cy="12" r="0.5" opacity="0.8"/><circle cx="319" cy="43" r="0.5" opacity="0.8"/><circle cx="133" cy="247" r="0.4" opacity="0.4"/><circle cx="441" cy="54" r="0.3" opacity="0.6"/><circle cx="29" cy="72" r="0.4" opacity="0.8"/><circle cx="186" cy="4" r="0.3" opacity="0.7"/><circle cx="70" cy="121" r="0.4" opacity="0.8"/><circle cx="449" cy="137" r="1.1" opacity="0.5"/><circle cx="13" cy="161" r="0.5" opacity="0.9"/><circle cx="7" cy="67" r="0.4" opacity="0.9"/><circle cx="277" cy="137" r="0.3" opacity="0.6"/><circle cx="278" cy="111" r="0.65" opacity="0.4"/><circle cx="54" cy="258" r="0.4" opacity="0.6"/><circle cx="274" cy="144" r="0.3" opacity="0.5"/><circle cx="288" cy="239" r="0.4" opacity="0.5"/><circle cx="445" cy="32" r="0.65" opacity="0.7"/><circle cx="241" cy="181" r="0.4" opacity="1.0"/><circle cx="147" cy="11" r="0.4" opacity="0.8"/><circle cx="314" cy="104" r="0.3" opacity="0.7"/><circle cx="172" cy="118" r="0.3" opacity="0.9"/><circle cx="117" cy="249" r="0.5" opacity="0.8"/><circle cx="223" cy="1" r="0.4" opacity="0.6"/><circle cx="396" cy="218" r="0.5" opacity="0.7"/><circle cx="429" cy="0" r="0.4" opacity="0.8"/><circle cx="177" cy="109" r="0.5" opacity="0.5"/><circle cx="213" cy="160" r="0.4" opacity="0.9"/><circle cx="460" cy="96" r="0.4" opacity="0.8"/><circle cx="412" cy="37" r="0.3" opacity="0.9"/><circle cx="380" cy="22" r="0.65" opacity="0.6"/><circle cx="238" cy="133" r="0.4" opacity="0.6"/><circle cx="48" cy="18" r="0.5" opacity="1.0"/><circle cx="350" cy="163" r="0.4" opacity="0.6"/><circle cx="415" cy="13" r="0.4" opacity="0.8"/><circle cx="160" cy="76" r="0.5" opacity="0.4"/><circle cx="349" cy="11" r="0.3" opacity="0.5"/><circle cx="105" cy="197" r="0.3" opacity="0.9"/><circle cx="140" cy="14" r="0.4" opacity="0.7"/><circle cx="252" cy="65" r="0.3" opacity="0.9"/><circle cx="322" cy="53" r="0.5" opacity="0.8"/><circle cx="53" cy="241" r="0.4" opacity="0.9"/><circle cx="308" cy="233" r="0.3" opacity="0.9"/><circle cx="288" cy="97" r="0.85" opacity="0.8"/><circle cx="289" cy="9" r="0.5" opacity="0.6"/><circle cx="183" cy="182" r="0.5" opacity="0.9"/><circle cx="92" cy="221" r="0.4" opacity="0.4"/><circle cx="402" cy="50" r="0.4" opacity="0.7"/><circle cx="40" cy="76" r="0.3" opacity="0.7"/><circle cx="27" cy="58" r="0.85" opacity="0.6"/><circle cx="204" cy="18" r="0.85" opacity="0.8"/><circle cx="138" cy="152" r="0.4" opacity="0.8"/><circle cx="189" cy="90" r="0.4" opacity="0.9"/><circle cx="359" cy="184" r="0.65" opacity="0.6"/><circle cx="379" cy="155" r="0.4" opacity="0.4"/><circle cx="336" cy="27" r="0.4" opacity="0.7"/><circle cx="40" cy="238" r="0.4" opacity="1.0"/><circle cx="421" cy="19" r="0.4" opacity="0.8"/><circle cx="221" cy="209" r="0.4" opacity="0.5"/><circle cx="394" cy="81" r="0.3" opacity="0.4"/><circle cx="17" cy="94" r="0.5" opacity="0.5"/><circle cx="114" cy="85" r="0.85" opacity="0.9"/><circle cx="363" cy="69" r="0.5" opacity="0.5"/><circle cx="370" cy="135" r="0.3" opacity="0.6"/><circle cx="214" cy="85" r="0.4" opacity="1.0"/><circle cx="267" cy="253" r="0.4" opacity="0.9"/><circle cx="111" cy="202" r="0.85" opacity="0.6"/><circle cx="17" cy="196" r="0.5" opacity="1.0"/><circle cx="77" cy="253" r="0.3" opacity="0.7"/><circle cx="9" cy="148" r="0.65" opacity="0.6"/><circle cx="29" cy="100" r="0.5" opacity="0.9"/><circle cx="130" cy="192" r="0.85" opacity="0.8"/><circle cx="198" cy="214" r="0.4" opacity="0.6"/><circle cx="228" cy="98" r="0.4" opacity="0.9"/><circle cx="351" cy="187" r="0.4" opacity="0.9"/><circle cx="352" cy="96" r="0.4" opacity="0.7"/><circle cx="282" cy="259" r="0.3" opacity="0.5"/><circle cx="450" cy="62" r="0.5" opacity="0.6"/><circle cx="220" cy="15" r="0.5" opacity="0.8"/><circle cx="68" cy="87" r="0.4" opacity="0.4"/><circle cx="107" cy="63" r="0.3" opacity="0.5"/><circle cx="47" cy="42" r="0.3" opacity="0.7"/><circle cx="100" cy="167" r="0.4" opacity="0.5"/><circle cx="250" cy="36" r="0.3" opacity="1.0"/><circle cx="291" cy="81" r="0.5" opacity="0.7"/><circle cx="373" cy="37" r="0.65" opacity="0.9"/><circle cx="261" cy="116" r="0.85" opacity="0.8"/><circle cx="110" cy="229" r="0.65" opacity="0.5"/><circle cx="27" cy="76" r="0.3" opacity="0.6"/><circle cx="430" cy="254" r="0.3" opacity="0.5"/><circle cx="259" cy="69" r="1.1" opacity="0.9"/><circle cx="222" cy="165" r="0.3" opacity="0.5"/><circle cx="225" cy="144" r="0.5" opacity="0.9"/><circle cx="140" cy="144" r="0.3" opacity="0.4"/><circle cx="180" cy="39" r="0.85" opacity="0.6"/><circle cx="59" cy="62" r="0.5" opacity="0.5"/><circle cx="0" cy="40" r="0.4" opacity="0.6"/><circle cx="61" cy="26" r="0.4" opacity="0.9"/><circle cx="52" cy="74" r="0.4" opacity="0.5"/><circle cx="405" cy="163" r="0.5" opacity="0.6"/><circle cx="5" cy="148" r="0.4" opacity="0.9"/><circle cx="340" cy="30" r="0.5" opacity="0.9"/><circle cx="52" cy="197" r="0.5" opacity="0.8"/><circle cx="342" cy="251" r="0.3" opacity="0.9"/><circle cx="454" cy="136" r="0.4" opacity="0.5"/><circle cx="451" cy="244" r="1.1" opacity="0.5"/><circle cx="56" cy="16" r="0.3" opacity="0.8"/><circle cx="257" cy="0" r="0.65" opacity="1.0"/><circle cx="15" cy="17" r="0.3" opacity="0.6"/><circle cx="350" cy="98" r="0.4" opacity="0.7"/><circle cx="449" cy="96" r="0.5" opacity="0.7"/><circle cx="419" cy="60" r="0.85" opacity="0.7"/><circle cx="289" cy="124" r="0.3" opacity="0.8"/><circle cx="343" cy="175" r="0.3" opacity="0.7"/><circle cx="78" cy="77" r="0.85" opacity="0.8"/><circle cx="409" cy="127" r="0.5" opacity="0.5"/><circle cx="149" cy="208" r="0.5" opacity="0.5"/><circle cx="380" cy="62" r="0.65" opacity="0.9"/><circle cx="117" cy="92" r="0.3" opacity="1.0"/><circle cx="136" cy="24" r="0.3" opacity="1.0"/><circle cx="225" cy="73" r="0.65" opacity="1.0"/><circle cx="11" cy="138" r="0.85" opacity="0.9"/><circle cx="260" cy="142" r="0.4" opacity="0.7"/><circle cx="226" cy="46" r="0.3" opacity="0.6"/><circle cx="307" cy="145" r="0.5" opacity="0.9"/><circle cx="51" cy="177" r="0.3" opacity="0.9"/><circle cx="203" cy="11" r="0.4" opacity="0.7"/><circle cx="391" cy="41" r="0.3" opacity="0.6"/><circle cx="242" cy="213" r="0.3" opacity="0.6"/><circle cx="147" cy="47" r="0.5" opacity="0.7"/><circle cx="179" cy="48" r="0.65" opacity="0.4"/><circle cx="278" cy="101" r="0.4" opacity="0.9"/><circle cx="163" cy="16" r="0.85" opacity="0.9"/><circle cx="172" cy="185" r="0.3" opacity="0.5"/><circle cx="391" cy="168" r="0.65" opacity="0.6"/><circle cx="250" cy="52" r="0.4" opacity="0.7"/><circle cx="82" cy="81" r="0.3" opacity="0.8"/><circle cx="319" cy="70" r="0.65" opacity="0.5"/><circle cx="304" cy="239" r="0.5" opacity="0.9"/><circle cx="298" cy="237" r="0.85" opacity="0.5"/><circle cx="441" cy="119" r="0.4" opacity="0.9"/><circle cx="241" cy="201" r="0.5" opacity="0.5"/><circle cx="181" cy="124" r="0.5" opacity="0.9"/><circle cx="264" cy="146" r="0.5" opacity="0.6"/><circle cx="176" cy="9" r="0.4" opacity="0.8"/><circle cx="265" cy="186" r="0.4" opacity="0.8"/><circle cx="314" cy="52" r="0.3" opacity="0.5"/><circle cx="307" cy="152" r="0.3" opacity="0.6"/><circle cx="310" cy="125" r="0.4" opacity="0.5"/><circle cx="155" cy="189" r="0.4" opacity="0.9"/><circle cx="232" cy="26" r="0.5" opacity="0.6"/><circle cx="442" cy="217" r="0.5" opacity="0.6"/><circle cx="381" cy="100" r="0.5" opacity="0.9"/><circle cx="388" cy="237" r="0.5" opacity="0.8"/><circle cx="374" cy="30" r="0.4" opacity="0.7"/><circle cx="340" cy="215" r="0.3" opacity="0.5"/><circle cx="16" cy="65" r="0.4" opacity="0.7"/><circle cx="166" cy="147" r="0.3" opacity="0.7"/><circle cx="307" cy="121" r="1.1" opacity="0.9"/><circle cx="28" cy="156" r="0.5" opacity="0.4"/><circle cx="78" cy="225" r="0.4" opacity="0.4"/><circle cx="191" cy="50" r="0.5" opacity="0.5"/><circle cx="236" cy="166" r="0.65" opacity="0.9"/><circle cx="313" cy="62" r="0.3" opacity="1.0"/><circle cx="420" cy="17" r="0.5" opacity="0.5"/><circle cx="134" cy="171" r="0.3" opacity="0.9"/><circle cx="2" cy="95" r="0.3" opacity="0.9"/><circle cx="155" cy="216" r="0.5" opacity="0.9"/><circle cx="401" cy="109" r="0.3" opacity="0.5"/><circle cx="351" cy="255" r="0.5" opacity="0.9"/><circle cx="241" cy="236" r="0.3" opacity="0.9"/><circle cx="109" cy="62" r="0.65" opacity="0.4"/><circle cx="381" cy="201" r="0.5" opacity="0.8"/><circle cx="122" cy="58" r="0.4" opacity="0.4"/><circle cx="282" cy="35" r="0.4" opacity="0.8"/><circle cx="419" cy="27" r="0.5" opacity="0.8"/><circle cx="38" cy="235" r="0.65" opacity="0.7"/><circle cx="238" cy="197" r="0.65" opacity="0.5"/><circle cx="193" cy="235" r="0.3" opacity="0.8"/><circle cx="19" cy="167" r="0.4" opacity="0.9"/><circle cx="68" cy="240" r="0.4" opacity="0.4"/><circle cx="81" cy="35" r="0.3" opacity="0.9"/><circle cx="275" cy="102" r="0.5" opacity="0.4"/><circle cx="39" cy="106" r="0.5" opacity="0.8"/><circle cx="66" cy="73" r="0.3" opacity="0.8"/><circle cx="150" cy="85" r="0.65" opacity="0.7"/><circle cx="77" cy="124" r="0.3" opacity="0.9"/><circle cx="124" cy="252" r="0.3" opacity="0.8"/><circle cx="32" cy="124" r="0.3" opacity="0.7"/><circle cx="288" cy="62" r="0.85" opacity="0.5"/><circle cx="266" cy="151" r="0.5" opacity="0.6"/><circle cx="3" cy="159" r="0.5" opacity="0.7"/><circle cx="128" cy="73" r="0.3" opacity="0.9"/><circle cx="208" cy="17" r="0.5" opacity="0.7"/><circle cx="186" cy="62" r="0.65" opacity="0.5"/><circle cx="99" cy="86" r="0.4" opacity="0.5"/><circle cx="312" cy="23" r="0.5" opacity="0.5"/><circle cx="295" cy="34" r="0.4" opacity="0.8"/><circle cx="90" cy="200" r="0.85" opacity="0.5"/><circle cx="82" cy="0" r="0.5" opacity="1.0"/><circle cx="94" cy="71" r="0.5" opacity="0.4"/><circle cx="6" cy="155" r="0.4" opacity="0.7"/><circle cx="300" cy="61" r="0.65" opacity="0.8"/><circle cx="416" cy="99" r="0.3" opacity="0.4"/><circle cx="324" cy="127" r="0.3" opacity="0.7"/><circle cx="297" cy="196" r="0.5" opacity="0.6"/><circle cx="56" cy="199" r="0.3" opacity="1.0"/><circle cx="199" cy="108" r="0.3" opacity="0.5"/><circle cx="179" cy="120" r="0.5" opacity="0.4"/><circle cx="18" cy="22" r="0.5" opacity="0.5"/><circle cx="223" cy="18" r="0.4" opacity="0.6"/><circle cx="176" cy="57" r="0.3" opacity="0.7"/><circle cx="195" cy="91" r="0.5" opacity="0.9"/><circle cx="268" cy="71" r="0.4" opacity="0.6"/><circle cx="52" cy="20" r="0.65" opacity="0.8"/><circle cx="415" cy="144" r="0.65" opacity="0.5"/><circle cx="325" cy="3" r="0.4" opacity="0.9"/><circle cx="25" cy="27" r="0.85" opacity="0.5"/><circle cx="316" cy="236" r="0.3" opacity="0.9"/><circle cx="57" cy="109" r="0.3" opacity="0.5"/><circle cx="184" cy="251" r="0.3" opacity="0.7"/><circle cx="141" cy="18" r="0.4" opacity="1.0"/><circle cx="392" cy="43" r="0.4" opacity="0.6"/><circle cx="410" cy="96" r="0.3" opacity="0.6"/><circle cx="209" cy="170" r="0.5" opacity="0.9"/><circle cx="22" cy="221" r="0.85" opacity="0.7"/><circle cx="164" cy="213" r="0.4" opacity="0.8"/><circle cx="428" cy="205" r="0.4" opacity="0.6"/><circle cx="24" cy="15" r="0.85" opacity="0.7"/><circle cx="17" cy="223" r="0.3" opacity="0.8"/><circle cx="173" cy="196" r="0.85" opacity="0.6"/><circle cx="194" cy="206" r="0.3" opacity="0.7"/><circle cx="370" cy="148" r="0.3" opacity="0.8"/><circle cx="409" cy="183" r="0.4" opacity="0.7"/><circle cx="42" cy="257" r="0.4" opacity="0.6"/><circle cx="206" cy="83" r="0.65" opacity="0.4"/><circle cx="362" cy="208" r="0.5" opacity="0.5"/><circle cx="304" cy="111" r="1.1" opacity="0.8"/><circle cx="208" cy="155" r="0.85" opacity="0.9"/><circle cx="331" cy="177" r="0.5" opacity="0.9"/><circle cx="312" cy="136" r="0.65" opacity="0.7"/><circle cx="209" cy="257" r="0.3" opacity="0.8"/><circle cx="156" cy="113" r="0.5" opacity="0.4"/><circle cx="355" cy="31" r="0.5" opacity="0.6"/><circle cx="429" cy="64" r="0.3" opacity="0.6"/><circle cx="336" cy="188" r="0.3" opacity="0.9"/><circle cx="336" cy="136" r="0.4" opacity="0.9"/><circle cx="306" cy="10" r="0.4" opacity="1.0"/><circle cx="264" cy="220" r="0.85" opacity="0.9"/><circle cx="186" cy="11" r="0.3" opacity="1.0"/><circle cx="204" cy="92" r="0.3" opacity="0.9"/><circle cx="389" cy="170" r="0.4" opacity="0.7"/><circle cx="329" cy="207" r="0.3" opacity="0.8"/><circle cx="27" cy="97" r="0.5" opacity="0.6"/><circle cx="273" cy="33" r="0.5" opacity="0.8"/><circle cx="38" cy="217" r="0.5" opacity="0.9"/><circle cx="396" cy="251" r="0.4" opacity="0.8"/><circle cx="459" cy="133" r="0.3" opacity="0.7"/><circle cx="79" cy="9" r="0.5" opacity="0.5"/><circle cx="20" cy="117" r="0.65" opacity="0.9"/><circle cx="385" cy="78" r="0.65" opacity="0.8"/><circle cx="326" cy="106" r="0.5" opacity="0.8"/><circle cx="296" cy="250" r="0.4" opacity="0.9"/><circle cx="277" cy="177" r="0.65" opacity="0.4"/><circle cx="325" cy="94" r="0.3" opacity="1.0"/><circle cx="136" cy="55" r="0.5" opacity="0.4"/><circle cx="314" cy="84" r="0.3" opacity="0.9"/><circle cx="87" cy="213" r="0.5" opacity="0.8"/><circle cx="310" cy="78" r="0.5" opacity="0.7"/><circle cx="9" cy="76" r="0.3" opacity="0.8"/><circle cx="47" cy="129" r="0.65" opacity="0.8"/><circle cx="27" cy="172" r="0.4" opacity="0.7"/><circle cx="403" cy="19" r="0.3" opacity="0.4"/><circle cx="114" cy="83" r="0.5" opacity="1.0"/><circle cx="113" cy="76" r="0.3" opacity="0.6"/><circle cx="283" cy="68" r="0.5" opacity="0.8"/><circle cx="357" cy="87" r="0.3" opacity="1.0"/><circle cx="179" cy="200" r="0.4" opacity="1.0"/><circle cx="2" cy="171" r="0.5" opacity="0.7"/><circle cx="21" cy="190" r="0.85" opacity="1.0"/><circle cx="6" cy="75" r="1.1" opacity="0.5"/><circle cx="214" cy="110" r="0.4" opacity="0.4"/><circle cx="105" cy="214" r="0.3" opacity="0.9"/><circle cx="279" cy="72" r="0.4" opacity="1.0"/><circle cx="17" cy="202" r="0.3" opacity="0.8"/><circle cx="18" cy="137" r="0.3" opacity="0.8"/><circle cx="45" cy="16" r="0.65" opacity="0.9"/><circle cx="431" cy="172" r="0.3" opacity="0.9"/><circle cx="58" cy="151" r="0.3" opacity="0.5"/><circle cx="217" cy="173" r="0.65" opacity="0.5"/><circle cx="452" cy="65" r="0.65" opacity="0.5"/><circle cx="220" cy="8" r="0.65" opacity="0.4"/><circle cx="140" cy="143" r="0.4" opacity="0.5"/><circle cx="10" cy="53" r="0.3" opacity="0.7"/><circle cx="379" cy="52" r="0.4" opacity="0.8"/><circle cx="346" cy="185" r="0.3" opacity="0.9"/><circle cx="288" cy="22" r="0.65" opacity="0.9"/><circle cx="47" cy="192" r="0.4" opacity="0.5"/><circle cx="262" cy="81" r="0.3" opacity="1.0"/><circle cx="22" cy="74" r="0.65" opacity="0.7"/><circle cx="83" cy="109" r="0.3" opacity="1.0"/><circle cx="132" cy="16" r="0.5" opacity="0.4"/><circle cx="30" cy="7" r="0.4" opacity="0.5"/><circle cx="1" cy="222" r="0.4" opacity="0.7"/><circle cx="243" cy="252" r="0.4" opacity="0.6"/><circle cx="196" cy="148" r="0.5" opacity="0.9"/><circle cx="432" cy="257" r="0.4" opacity="0.4"/><circle cx="391" cy="201" r="0.85" opacity="0.5"/><circle cx="178" cy="141" r="0.3" opacity="0.7"/><circle cx="143" cy="46" r="0.65" opacity="0.7"/><circle cx="329" cy="86" r="0.4" opacity="0.9"/><circle cx="179" cy="8" r="0.4" opacity="0.6"/><circle cx="267" cy="120" r="0.5" opacity="0.6"/><circle cx="271" cy="102" r="0.4" opacity="0.7"/><circle cx="171" cy="157" r="0.5" opacity="0.9"/><circle cx="389" cy="97" r="0.3" opacity="0.7"/><circle cx="327" cy="60" r="0.5" opacity="1.0"/><circle cx="296" cy="1" r="0.3" opacity="0.8"/><circle cx="8" cy="210" r="0.4" opacity="0.9"/><circle cx="267" cy="145" r="0.65" opacity="0.9"/><circle cx="48" cy="241" r="0.65" opacity="0.7"/><circle cx="190" cy="197" r="0.65" opacity="0.5"/><circle cx="431" cy="191" r="0.4" opacity="0.7"/><circle cx="217" cy="115" r="0.3" opacity="0.9"/><circle cx="206" cy="161" r="0.65" opacity="0.6"/><circle cx="20" cy="219" r="0.4" opacity="0.9"/><circle cx="392" cy="90" r="0.5" opacity="0.6"/><circle cx="8" cy="226" r="0.3" opacity="0.5"/><circle cx="400" cy="123" r="0.65" opacity="0.9"/><circle cx="260" cy="112" r="0.4" opacity="0.8"/><circle cx="99" cy="201" r="0.3" opacity="0.8"/><circle cx="158" cy="165" r="0.3" opacity="0.9"/><circle cx="86" cy="27" r="0.4" opacity="0.8"/><circle cx="65" cy="59" r="0.4" opacity="0.9"/><circle cx="186" cy="222" r="0.3" opacity="0.9"/><circle cx="266" cy="113" r="0.5" opacity="0.9"/><circle cx="439" cy="213" r="0.3" opacity="0.8"/><circle cx="205" cy="182" r="0.4" opacity="0.7"/></g>
    <path d="M27.5 22.8 H230.2 V230.8 L230.2 230.8 L228.4 230.4 L225.8 230.5 L222.9 229.7 L219.0 229.9 L216.8 228.7 L213.4 229.3 L210.7 229.0 L207.7 228.6 L205.6 228.4 L202.4 227.2 L199.2 227.4 L197.2 227.4 L194.2 227.6 L191.6 226.3 L188.1 226.3 L185.1 226.7 L181.9 225.8 L178.7 225.7 L175.6 225.1 L172.9 225.4 L169.0 224.1 L165.2 223.3 L162.9 223.8 L160.1 222.9 L158.0 223.2 L155.9 222.8 L151.9 223.3 L147.9 224.0 L145.3 223.9 L143.2 223.8 L141.1 224.3 L137.5 223.7 L135.2 224.1 L131.6 223.9 L127.7 225.3 L125.5 224.2 L122.4 224.7 L120.0 224.2 L116.8 224.1 L112.9 223.6 L110.6 223.1 L106.6 222.9 L102.7 222.2 L98.9 221.7 L95.7 221.0 L93.0 220.9 L90.4 220.8 L87.5 221.0 L85.1 219.5 L82.9 220.3 L79.0 219.3 L75.4 219.4 L71.6 220.2 L67.8 220.5 L64.9 221.0 L62.8 220.4 L59.6 221.3 L57.5 221.1 L54.0 220.5 L50.3 220.3 L48.0 220.0 L45.0 220.0 L42.1 219.6 L39.6 218.0 L35.9 216.9 L33.8 217.3 L30.6 216.3 L27.5 215.4 Z" fill="#fff"/>
    <rect x="97.5" y="16" width="63.5" height="15.2" fill="#d5d5d3" fill-opacity="0.67"/>
    <text x="129.4" y="70.3" font-family="Liberation Sans" font-size="15.4" style="fill:var(--tt,#2a2a2a);stroke:var(--tt,#2a2a2a)" stroke-width="0.15" text-anchor="middle">Formation</text>
    <g font-family="Liberation Sans" font-size="8.75" style="fill:var(--tc,#111);stroke:var(--tc,#111)" stroke-width="0.38">
      <text x="48" y="137.3" stroke="none">&#8226;</text>
      <text x="57.1" y="137.3">Black holes are formed when massive</text>
      <text x="57.1" y="147.35">stars exhaust their nuclear fuel and</text>
      <text x="57.1" y="157.4">undergo gravitational collapse. The</text>
      <text x="57.1" y="167.45">core contracts, and if the mass is</text>
      <text x="57.1" y="177.5">sufficient, it becomes a black hole.</text>
    </g>
  </symbol>
</defs></svg>
<div id="root" style="position:absolute;left:0;top:0;width:768px;height:481px;will-change:transform;overflow:hidden">
<div id="top" class="a">
  <!-- title row -->
  <div class="t" style="left:11px;top:7.8px;font-size:6px;color:#cdcdcd;-webkit-text-stroke:0">AutoSave</div>
  <div class="a" style="left:40px;top:7px;width:15px;height:7.5px;border-radius:4px;background:#bdbdbd"></div>
  <div class="a" style="left:40.5px;top:7.5px;width:6.5px;height:6.5px;border-radius:50%;background:#fff"></div>
  <div class="t" style="left:363.4px;top:7.9px;font-size:6.7px;color:#3b3b3b;-webkit-text-stroke:0.1px">Presentation3</div>


  <svg class="a" style="left:0;top:0" width="768" height="36" viewBox="0 0 768 36">
    <g fill="none" stroke="#707070" stroke-width="0.9" stroke-linecap="round" stroke-linejoin="round">
      <!-- home -->
      <path d="M61.6 10.3 L65.2 6.6 L68.8 10.3 V13.8 H66.7 V11.8 Q65.2 10.2 63.7 11.8 V13.8 H61.6 Z"/>
      <!-- save -->
      <rect x="75.6" y="7.2" width="7.4" height="6.4" rx="0.8"/>
      <!-- undo -->
      <path d="M90.5 7 L90.5 10 L93.5 10"/>
      <path d="M90.7 9.8 Q93 6.8 95.5 7.6 Q98 8.8 96.5 11.5 L93.8 14.4"/>
      <!-- chevron -->
      <path d="M102.2 10 L103.5 11.5 L104.8 10" stroke-width="1"/>
      <!-- redo circle -->
      <path d="M118.2 8.8 A4.3 4.3 0 1 0 118.8 11.5"/>
      <path d="M118.6 6.5 V9.2 H116"/>
    </g>
    <g fill="#707070">
      <rect x="77.2" y="7.4" width="4.2" height="1.9"/>
      <rect x="77" y="11" width="4.6" height="0.9"/>
      <circle cx="125.8" cy="10.6" r="0.75"/><circle cx="128.7" cy="10.6" r="0.75"/><circle cx="131.6" cy="10.6" r="0.75"/>
    </g>
    <g fill="none" stroke="#6a6a6a" stroke-width="0.9" stroke-linecap="round">
      <!-- search -->
      <circle cx="738.9" cy="10.2" r="2.7"/>
      <path d="M740.9 12.2 L743 14"/>
      <!-- coauthor -->
      <circle cx="759.6" cy="8.2" r="2.1"/>
      <path d="M757.8 9.5 Q758.2 11.2 760.2 11.3 Q762 11.2 762 9.6"/>
      <circle cx="756" cy="10.6" r="1.9"/>
      <path d="M753.4 13.4 Q753.6 14.7 756 14.7 Q758.4 14.7 758.6 13.4 Q758 12.2 756 12.4 Q754 12.2 753.4 13.4 Z"/>
    </g>
    <!-- lightbulb -->
    <g fill="none" stroke="#555" stroke-width="0.8">
      <path d="M379.4 28.6 Q378 27.2 378 26 A3.1 3.1 0 1 1 384.2 26 Q384.2 27.2 382.8 28.6 L381.1 30.6 Z"/>
      <path d="M380.4 31.4 H381.8"/>
    </g>
  </svg>

  <!-- buttons -->
  <div class="a" style="left:532.8px;top:22.3px;width:40.8px;height:12px;background:#fff;border:0.7px solid #e0e0e0;border-radius:3px"></div>
  <div class="a" style="left:579.7px;top:22.3px;width:53.1px;height:12px;background:#fff;border:0.7px solid #e0e0e0;border-radius:3px"></div>
  <div class="a" style="left:638.9px;top:22.3px;width:72.9px;height:12px;background:#fff;border:0.7px solid #e0e0e0;border-radius:3px"></div>
  <div class="a" style="left:717.2px;top:21.8px;width:45.7px;height:12.8px;background:#c43e1c;border-radius:3px"></div>
  <svg class="a" style="left:0;top:0" width="768" height="36" viewBox="0 0 768 36">
    <circle cx="541.3" cy="28.3" r="3.7" fill="none" stroke="#222" stroke-width="0.9"/>
    <circle cx="541.3" cy="28.3" r="2.4" fill="#111"/>
    <path d="M584.6 25 H592.4 V30.6 H587.5 L585.8 32.2 V30.6 H584.6 Z" fill="none" stroke="#333" stroke-width="0.9" stroke-linejoin="round"/>
    <!-- teams -->
    <rect x="643" y="25.3" width="5.2" height="6" rx="0.6" fill="#333"/>
    <circle cx="649.5" cy="25.5" r="1.3" fill="#333"/>
    <path d="M648.6 27.2 H651.6 V30.2 Q651.6 32 650 32 Q648.6 32 648.6 30.5 Z" fill="#333"/>
    <circle cx="646.8" cy="24.3" r="1.3" fill="#333"/>
    <path d="M644.3 26.6 H646.9 M645.6 26.6 V30" stroke="#fff" stroke-width="0.8"/>
    <!-- share -->
    <path d="M724.5 25.5 H721 V32.2 H728.2 V29.5" fill="none" stroke="#fff" stroke-width="0.9"/>
    <path d="M723.5 30 Q724.5 26.5 728 26.5 M726.3 24.8 L728.3 26.5 L726.3 28.2" fill="none" stroke="#fff" stroke-width="0.9"/>
    <path d="M755.6 27.2 L757.3 29 L759 27.2" fill="none" stroke="#fff" stroke-width="0.9"/>
  </svg>
  <div class="t" style="left:548.2px;top:25.9px;font-size:6.8px;color:#222">Record</div>
  <div class="t" style="left:595.3px;top:25.4px;font-size:7px;color:#222">Comments</div>
  <div class="t" style="left:654.1px;top:25.4px;font-size:7.05px;color:#222">Present in Teams</div>
  <div class="t" style="left:733px;top:24.9px;font-size:7px;color:#fff;-webkit-text-stroke:0.3px">Share</div>

  <!-- tabs -->
  <div class="t" style="left:6px;top:24.1px;font-size:7.2px">Home</div>
  <div class="t" style="left:37.6px;top:24.1px;font-size:7.2px">Insert</div>
  <div class="t" style="left:69.8px;top:24.1px;font-size:7.2px">Draw</div>
  <div class="t" style="left:98.6px;top:24.1px;font-size:7px;font-weight:bold;-webkit-text-stroke:0.05px">Design</div>
  <div class="a" style="left:98.3px;top:33.3px;width:23.4px;height:1.4px;background:#c43e1c;border-radius:1px"></div>
  <div class="t" style="left:134.8px;top:24.1px;font-size:7.2px">Transitions</div>
  <div class="t" style="left:184.2px;top:24.1px;font-size:7.2px">Animations</div>
  <div class="t" style="left:233.4px;top:24.1px;font-size:7.2px">Slide Show</div>
  <div class="t" style="left:281.7px;top:24.1px;font-size:7.2px">Record</div>
  <div class="t" style="left:317.5px;top:24.1px;font-size:7.2px">Review</div>
  <div class="t" style="left:353px;top:24.1px;font-size:7.2px">View</div>
  <div class="t" style="left:389px;top:24.1px;font-size:7.2px">Tell me</div>

  <!-- galleries -->
  <div class="gal" style="left:6px;width:415px"></div>
  <div class="gal" style="left:432.3px;width:217px"></div>
<div class="a" style="left:14.6px;top:39.2px;width:49.4px;height:28.4px;border:1.3px solid #f2a08c;border-radius:3px;background:#fff"></div><div class="a" style="left:16.8px;top:41px;width:45px;height:25px;border:0.8px solid #d8d8d8;background:#fff"></div><div class="t" style="left:20.3px;top:46.2px;font-size:10.3px;color:#222;-webkit-text-stroke:0;letter-spacing:-0.3px">Aa</div><div class="a" style="left:20.20px;top:60.6px;width:4.1px;height:2.6px;background:#4472c4;border-radius:0.6px"></div><div class="a" style="left:25.20px;top:60.6px;width:4.1px;height:2.6px;background:#ed7d31;border-radius:0.6px"></div><div class="a" style="left:30.20px;top:60.6px;width:4.1px;height:2.6px;background:#a5a5a5;border-radius:0.6px"></div><div class="a" style="left:35.20px;top:60.6px;width:4.1px;height:2.6px;background:#ffc000;border-radius:0.6px"></div><div class="a" style="left:40.20px;top:60.6px;width:4.1px;height:2.6px;background:#5b9bd5;border-radius:0.6px"></div><div class="a" style="left:45.20px;top:60.6px;width:4.1px;height:2.6px;background:#70ad47;border-radius:0.6px"></div><div class="a" style="left:67px;top:40.5px;width:45px;height:25.5px;border:0.8px solid #cdcdcd;border-radius:1.2px;background:#fff"></div><div class="t" style="left:70.5px;top:46.2px;font-size:10.3px;color:#222;-webkit-text-stroke:0;letter-spacing:-0.3px">Aa</div><div class="a" style="left:69.80px;top:60.8px;width:4.1px;height:2.6px;background:#4472c4;border-radius:0.6px"></div><div class="a" style="left:74.80px;top:60.8px;width:4.1px;height:2.6px;background:#ed7d31;border-radius:0.6px"></div><div class="a" style="left:79.80px;top:60.8px;width:4.1px;height:2.6px;background:#a5a5a5;border-radius:0.6px"></div><div class="a" style="left:84.80px;top:60.8px;width:4.1px;height:2.6px;background:#ffc000;border-radius:0.6px"></div><div class="a" style="left:89.80px;top:60.8px;width:4.1px;height:2.6px;background:#5b9bd5;border-radius:0.6px"></div><div class="a" style="left:94.80px;top:60.8px;width:4.1px;height:2.6px;background:#70ad47;border-radius:0.6px"></div><div class="a" style="left:116.7px;top:41px;width:44px;height:24.5px;background:linear-gradient(90deg,#263230 0,#2a3632 71%,#8fb880 75%,#cfe6c2 85%,#a8d08c 100%)"></div><div class="a" style="left:117px;top:41px;width:1.2px;height:24.5px;background:#1a2220"></div><div class="t" style="left:120.5px;top:46px;font-size:10.3px;color:#f4f4f4;-webkit-text-stroke:0;letter-spacing:-0.3px">Aa</div><div class="a" style="left:120.00px;top:60.3px;width:4.1px;height:2.6px;background:#a5d88a;border-radius:0.6px"></div><div class="a" style="left:125.00px;top:60.3px;width:4.1px;height:2.6px;background:#57c29a;border-radius:0.6px"></div><div class="a" style="left:130.00px;top:60.3px;width:4.1px;height:2.6px;background:#3fa7d6;border-radius:0.6px"></div><div class="a" style="left:135.00px;top:60.3px;width:4.1px;height:2.6px;background:#e6c44a;border-radius:0.6px"></div><div class="a" style="left:140.00px;top:60.3px;width:4.1px;height:2.6px;background:#f2a33a;border-radius:0.6px"></div><div class="a" style="left:145.00px;top:60.3px;width:4.1px;height:2.6px;background:#92cfe0;border-radius:0.6px"></div><div class="a" style="left:166.2px;top:41px;width:44.4px;height:24.5px;border:0.8px solid #dadada;background:#fff"></div><div class="a" style="left:171.6px;top:44.8px;width:33.2px;height:15.3px;background:#f21c0a"></div><div class="a" style="left:171.6px;top:47px;width:33.2px;height:0.6px;background:#f6796c"></div><div class="t" style="left:170.8px;top:47.2px;font-size:9.5px;color:#fff;-webkit-text-stroke:0;letter-spacing:-0.3px">Aa</div><div class="a" style="left:169.50px;top:61.5px;width:4.2px;height:2.6px;background:#e8140c;border-radius:0.6px"></div><div class="a" style="left:174.50px;top:61.5px;width:4.2px;height:2.6px;background:#f08a24;border-radius:0.6px"></div><div class="a" style="left:179.50px;top:61.5px;width:4.2px;height:2.6px;background:#9bbb3c;border-radius:0.6px"></div><div class="a" style="left:184.50px;top:61.5px;width:4.2px;height:2.6px;background:#3cb8a0;border-radius:0.6px"></div><div class="a" style="left:189.50px;top:61.5px;width:4.2px;height:2.6px;background:#3a8fd0;border-radius:0.6px"></div><div class="a" style="left:194.50px;top:61.5px;width:4.2px;height:2.6px;background:#a95ed4;border-radius:0.6px"></div><div class="a" style="left:215.8px;top:41px;width:44.3px;height:24.5px;background:radial-gradient(ellipse at 60% 40%,#f2f0ec,#dedad2)"></div><div class="a" style="left:215.8px;top:63.6px;width:44.3px;height:1.9px;background:linear-gradient(90deg,#7a5530,#a07a48,#6e4c2a,#9a7444)"></div><div class="a" style="left:231px;top:53.2px;width:25px;height:0.6px;background:#e6b8c0"></div><div class="t" style="left:219.2px;top:46.3px;font-size:10.3px;color:#1c1c1c;-webkit-text-stroke:0;letter-spacing:-0.3px">Aa</div><div class="a" style="left:219.00px;top:60.3px;width:4.1px;height:2.6px;background:#c6183e;border-radius:0.6px"></div><div class="a" style="left:224.00px;top:60.3px;width:4.1px;height:2.6px;background:#e84b8a;border-radius:0.6px"></div><div class="a" style="left:229.00px;top:60.3px;width:4.1px;height:2.6px;background:#c17de6;border-radius:0.6px"></div><div class="a" style="left:234.00px;top:60.3px;width:4.1px;height:2.6px;background:#8a5bc6;border-radius:0.6px"></div><div class="a" style="left:239.00px;top:60.3px;width:4.1px;height:2.6px;background:#4f77c9;border-radius:0.6px"></div><div class="a" style="left:244.00px;top:60.3px;width:4.1px;height:2.6px;background:#4fa3b8;border-radius:0.6px"></div><div class="a" style="left:265.5px;top:41px;width:44.3px;height:24.5px;background:#9fb3bb"></div><div class="t" style="left:269px;top:46.3px;font-size:10.3px;color:#2a2a2a;-webkit-text-stroke:0;letter-spacing:-0.3px">Aa</div><div class="a" style="left:268.60px;top:60.3px;width:4.1px;height:2.6px;background:#f59d1a;border-radius:0.6px"></div><div class="a" style="left:273.60px;top:60.3px;width:4.1px;height:2.6px;background:#9fb3bb;border-radius:0.6px"></div><div class="a" style="left:278.60px;top:60.3px;width:4.1px;height:2.6px;background:#d9642a;border-radius:0.6px"></div><div class="a" style="left:283.60px;top:60.3px;width:4.1px;height:2.6px;background:#a7ae8c;border-radius:0.6px"></div><div class="a" style="left:288.60px;top:60.3px;width:4.1px;height:2.6px;background:#8c7b55;border-radius:0.6px"></div><div class="a" style="left:293.60px;top:60.3px;width:4.1px;height:2.6px;background:#b8ab90;border-radius:0.6px"></div><div class="a" style="left:315.2px;top:40.5px;width:44.4px;height:24.7px;border:0.8px solid #d8d8d8;background:#fff"></div><div class="a" style="left:318.5px;top:45.3px;width:36.6px;height:10.9px;background:repeating-linear-gradient(90deg,#dcdcdc 0,#e6e6e6 1.3px,#d4d4d4 2.1px,#e2e2e2 3px)"></div><div class="t" style="left:319px;top:46.6px;font-size:10px;color:#555;font-family:'Liberation Serif',serif;font-weight:bold;letter-spacing:-0.3px">Aa</div><div class="a" style="left:349.9px;top:55.6px;width:4px;height:4px;border-radius:50%;background:#d94a1c"></div><div class="a" style="left:318.00px;top:60.5px;width:4.1px;height:2.6px;background:#d9461c;border-radius:0.6px"></div><div class="a" style="left:323.00px;top:60.5px;width:4.1px;height:2.6px;background:#a8301c;border-radius:0.6px"></div><div class="a" style="left:328.00px;top:60.5px;width:4.1px;height:2.6px;background:#c0a072;border-radius:0.6px"></div><div class="a" style="left:333.00px;top:60.5px;width:4.1px;height:2.6px;background:#a26a4c;border-radius:0.6px"></div><div class="a" style="left:338.00px;top:60.5px;width:4.1px;height:2.6px;background:#b49690;border-radius:0.6px"></div><div class="a" style="left:343.00px;top:60.5px;width:4.1px;height:2.6px;background:#9a5a4a;border-radius:0.6px"></div><div class="a" style="left:365.6px;top:42px;width:42.7px;height:22.6px;border:0.8px solid #d0d0d0;background:radial-gradient(ellipse at 40% 50%,#8a3a7a 0%,#5e2a6a 45%,#2e1548 100%)"></div><div class="a" style="left:403px;top:40.8px;width:2.2px;height:4.2px;border-radius:1px;background:#e0307a"></div><div class="t" style="left:369px;top:46.2px;font-size:10.6px;color:#f4f4f4;-webkit-text-stroke:0;letter-spacing:-0.3px">Aa</div><div class="a" style="left:368.80px;top:60.6px;width:3.8px;height:2.6px;background:#d41f6c;border-radius:0.6px"></div><div class="a" style="left:373.70px;top:60.6px;width:3.8px;height:2.6px;background:#ef4a6f;border-radius:0.6px"></div><div class="a" style="left:378.60px;top:60.6px;width:3.8px;height:2.6px;background:#f7752f;border-radius:0.6px"></div><div class="a" style="left:383.50px;top:60.6px;width:3.8px;height:2.6px;background:#f5a52a;border-radius:0.6px"></div><div class="a" style="left:388.40px;top:60.6px;width:3.8px;height:2.6px;background:#a77ff0;border-radius:0.6px"></div><div class="a" style="left:393.30px;top:60.6px;width:3.8px;height:2.6px;background:#e248d6;border-radius:0.6px"></div><svg class="a" style="left:414px;top:50px" width="6" height="7"><path d="M1.5 1.5 L3.8 3.5 L1.5 5.5" fill="none" stroke="#444" stroke-width="0.9"/></svg><div class="a" style="left:426.4px;top:38px;width:0.8px;height:31px;background:#dcdcdc"></div><div class="a" style="left:441.5px;top:39.3px;width:49.2px;height:28.3px;border:1.3px solid #f2a08c;border-radius:3px;background:#fff"></div><div class="a" style="left:443.7px;top:41px;width:44.8px;height:25px;border:0.8px solid #dcdcdc;background:#fff"></div><div class="a" style="left:447.30px;top:60.7px;width:4.1px;height:2.6px;background:#4472c4;border-radius:0.6px"></div><div class="a" style="left:452.30px;top:60.7px;width:4.1px;height:2.6px;background:#ed7d31;border-radius:0.6px"></div><div class="a" style="left:457.30px;top:60.7px;width:4.1px;height:2.6px;background:#a5a5a5;border-radius:0.6px"></div><div class="a" style="left:462.30px;top:60.7px;width:4.1px;height:2.6px;background:#ffc000;border-radius:0.6px"></div><div class="a" style="left:467.30px;top:60.7px;width:4.1px;height:2.6px;background:#5b9bd5;border-radius:0.6px"></div><div class="a" style="left:472.30px;top:60.7px;width:4.1px;height:2.6px;background:#70ad47;border-radius:0.6px"></div><div class="a" style="left:493.4px;top:40.3px;width:44.9px;height:25.4px;border:0.8px solid #e4e4e4;border-radius:2px;background:#fff"></div><div class="a" style="left:496.70px;top:60.4px;width:4.1px;height:2.6px;background:#1f8a70;border-radius:0.6px"></div><div class="a" style="left:501.70px;top:60.4px;width:4.1px;height:2.6px;background:#8dc63f;border-radius:0.6px"></div><div class="a" style="left:506.70px;top:60.4px;width:4.1px;height:2.6px;background:#3fb0d6;border-radius:0.6px"></div><div class="a" style="left:511.70px;top:60.4px;width:4.1px;height:2.6px;background:#1f6fb2;border-radius:0.6px"></div><div class="a" style="left:516.70px;top:60.4px;width:4.1px;height:2.6px;background:#b5440c;border-radius:0.6px"></div><div class="a" style="left:521.70px;top:60.4px;width:4.1px;height:2.6px;background:#f59e1a;border-radius:0.6px"></div><div class="a" style="left:543.2px;top:41px;width:45px;height:24.6px;background:#000;border:0.8px solid #d0d0d0"></div><div class="a" style="left:546.60px;top:60.4px;width:4.1px;height:2.6px;background:#4472c4;border-radius:0.6px"></div><div class="a" style="left:551.60px;top:60.4px;width:4.1px;height:2.6px;background:#ed7d31;border-radius:0.6px"></div><div class="a" style="left:556.60px;top:60.4px;width:4.1px;height:2.6px;background:#a5a5a5;border-radius:0.6px"></div><div class="a" style="left:561.60px;top:60.4px;width:4.1px;height:2.6px;background:#ffc000;border-radius:0.6px"></div><div class="a" style="left:566.60px;top:60.4px;width:4.1px;height:2.6px;background:#5b9bd5;border-radius:0.6px"></div><div class="a" style="left:571.60px;top:60.4px;width:4.1px;height:2.6px;background:#70ad47;border-radius:0.6px"></div><div class="a" style="left:592.7px;top:41px;width:45px;height:24.6px;background:#000;border:0.8px solid #d0d0d0"></div><div class="a" style="left:596.20px;top:60.4px;width:4.1px;height:2.6px;background:#2bb6a0;border-radius:0.6px"></div><div class="a" style="left:601.20px;top:60.4px;width:4.1px;height:2.6px;background:#8dc63f;border-radius:0.6px"></div><div class="a" style="left:606.20px;top:60.4px;width:4.1px;height:2.6px;background:#3fa7d6;border-radius:0.6px"></div><div class="a" style="left:611.20px;top:60.4px;width:4.1px;height:2.6px;background:#8a5bc6;border-radius:0.6px"></div><div class="a" style="left:616.20px;top:60.4px;width:4.1px;height:2.6px;background:#c6442a;border-radius:0.6px"></div><div class="a" style="left:621.20px;top:60.4px;width:4.1px;height:2.6px;background:#f59e1a;border-radius:0.6px"></div><div class="a" style="left:654.5px;top:37px;width:0.8px;height:33px;background:#dcdcdc"></div><div class="a" style="left:725.4px;top:37.6px;width:0.8px;height:32px;background:#dcdcdc"></div><svg class="a" style="left:0;top:36px" width="768" height="36" viewBox="0 36 768 36">
  <rect x="664.8" y="43.8" width="12.4" height="9.8" fill="#fff" stroke="#858585" stroke-width="1.6"/>
  <path d="M664.2 42 H677.6 M664.3 41.2 V42.8 M677.5 41.2 V42.8" stroke="#4aa3e8" stroke-width="0.8"/>
  <path d="M662.6 43.2 V53.8" stroke="#4aa3e8" stroke-width="0.8"/>
  <path d="M681.2 47.3 L682.6 48.7 L684 47.3" fill="none" stroke="#444" stroke-width="0.8"/>
  <path d="M697.3 40.4 H703.8 L708.5 45 V54.5 H697.3 Z" fill="#fff" stroke="#6a6a6a" stroke-width="0.75" stroke-linejoin="round"/>
  <path d="M703.8 40.6 V45 H708.3" fill="none" stroke="#8a8a8a" stroke-width="0.6"/>
  <path d="M696.1 47.8 L700.5 43.8 L703.8 47.4 L699.6 51.2 Z" fill="#fff" stroke="#555" stroke-width="0.75" stroke-linejoin="round"/>
  <path d="M700.4 44 L699.6 42.3" stroke="#555" stroke-width="0.7"/>
  <path d="M702.2 45.2 Q704.6 45.8 704.7 50.3" fill="none" stroke="#3a8ee0" stroke-width="1.1" stroke-linecap="round"/>
  <rect x="734" y="38" width="18.8" height="18.5" rx="2" fill="#c6c6c6"/>
  <rect x="736.3" y="41.7" width="14.4" height="11.5" fill="#fff" stroke="#7a7a7a" stroke-width="0.7"/>
  <rect x="736.3" y="41.7" width="14.4" height="2.8" fill="#8c8c8c"/>
  <rect x="736.3" y="51.6" width="14.4" height="1.6" fill="#9a9a9a"/>
  <path d="M746.2 44.5 V51.6" stroke="#777" stroke-width="0.7"/>
  <path d="M739 39 H742.4 L740.4 43.2 H742.6 L736.4 50.8 L738.4 45.4 H736.5 Z" fill="#f6a52a" stroke="#fff3d8" stroke-width="0.35" stroke-linejoin="round"/>
</svg><div class="t" style="left:666px;top:58.3px;font-size:6.2px;color:#333;-webkit-text-stroke:0.05px">Slide</div><div class="t" style="left:666.5px;top:64.5px;font-size:6.2px;color:#333;-webkit-text-stroke:0.05px">Size</div><div class="t" style="left:694.2px;top:59px;font-size:5.9px;color:#333;-webkit-text-stroke:0.05px">Format</div><div class="t" style="left:688px;top:65.2px;font-size:5.8px;color:#333;-webkit-text-stroke:0.05px">Background</div><div class="t" style="left:732.1px;top:58.8px;font-size:5.9px;color:#333;-webkit-text-stroke:0.05px">Designer</div>
</div>

<div id="left" class="a" style="overflow:hidden"><div class="t" style="left:5.8px;top:5.6px;font-size:7px;color:#5a5a5a;-webkit-text-stroke:0">1</div><div class="sl" style="top:5px"><svg width="84.5" height="47" viewBox="0 0 460 259" style="display:block"><rect width="460" height="259" fill="#fff"/><text x="230" y="123" text-anchor="middle" font-family="Liberation Sans" font-size="27" fill="#2a2a2a">Black Holes</text><text x="230" y="142" text-anchor="middle" font-family="Liberation Sans" font-size="11" fill="#333" stroke="#333" stroke-width="0.2">A Journey Into the Unknown</text></svg></div><div class="t" style="left:5.8px;top:63.1px;font-size:7px;color:#5a5a5a;-webkit-text-stroke:0">2</div><div class="sl" style="top:62.5px"><svg width="84.5" height="47" viewBox="0 0 460 259" style="display:block"><rect width="460" height="259" fill="#fff"/><text x="32" y="41" font-family="Liberation Sans" font-size="20" fill="#3a3a3a">Introduction</text><g font-family="Liberation Sans" font-size="13.2" fill="#2a2a2a" stroke="#2a2a2a" stroke-width="0.35"><text x="27" y="76.0">• Black holes are mysterious and fascinating objects in the universe.</text><text x="33" y="92.5">They are regions of space where gravity is so strong that nothing, not</text><text x="33" y="109.0">even light, can escape.</text></g></svg></div><div class="t" style="left:5.8px;top:121.1px;font-size:7px;color:#5a5a5a;-webkit-text-stroke:0">3</div><div class="a" style="left:14.6px;top:118.1px;width:88.4px;height:51px;border:2px solid #c9502a;border-radius:3.5px;background:#1a1a1a"></div><div class="sl" style="top:120.5px;height:47.5px;border-radius:1.5px"><svg width="84.5" height="47.5" viewBox="0 0 460 259" preserveAspectRatio="none" style="display:block;--tc:#707070;--tt:#888"><use href="#galaxy"/></svg></div><div class="t" style="left:5.8px;top:178.1px;font-size:7px;color:#5a5a5a;-webkit-text-stroke:0">4</div><div class="sl" style="top:177.5px"><svg width="84.5" height="47" viewBox="0 0 460 259" style="display:block"><rect width="460" height="259" fill="#fff"/><text x="32" y="41" font-family="Liberation Sans" font-size="20" fill="#3a3a3a">Properties</text><g font-family="Liberation Sans" font-size="13.2" fill="#2a2a2a" stroke="#2a2a2a" stroke-width="0.35"><text x="27" y="76.0">• Black holes have three main properties: mass, charge, and spin. The</text><text x="33" y="92.5">singularity at the center is a point of infinite density where the normal</text><text x="33" y="109.0">laws of physics break down.</text></g></svg></div><div class="t" style="left:5.8px;top:235.6px;font-size:7px;color:#5a5a5a;-webkit-text-stroke:0">5</div><div class="sl" style="top:235px"><svg width="84.5" height="47" viewBox="0 0 460 259" style="display:block"><rect width="460" height="259" fill="#fff"/><text x="32" y="41" font-family="Liberation Sans" font-size="20" fill="#3a3a3a">Event Horizon</text><g font-family="Liberation Sans" font-size="13.2" fill="#2a2a2a" stroke="#2a2a2a" stroke-width="0.35"><text x="27" y="76.0">• The event horizon is the boundary surrounding a black hole beyond</text><text x="33" y="92.5">which nothing can escape. Once an object crosses this boundary, it is</text><text x="33" y="109.0">lost to the black hole.</text></g></svg></div><div class="t" style="left:5.8px;top:293.1px;font-size:7px;color:#5a5a5a;-webkit-text-stroke:0">6</div><div class="sl" style="top:292.5px"><svg width="84.5" height="47" viewBox="0 0 460 259" style="display:block"><rect width="460" height="259" fill="#fff"/><text x="32" y="41" font-family="Liberation Sans" font-size="20" fill="#3a3a3a">Hawking Radiation</text><g font-family="Liberation Sans" font-size="13.2" fill="#2a2a2a" stroke="#2a2a2a" stroke-width="0.35"><text x="27" y="76.0">• Proposed by Stephen Hawking, Hawking radiation is theoretical</text><text x="33" y="92.5">radiation that black holes can emit due to quantum effects near the</text><text x="33" y="109.0">event horizon. It is a slow process leading to black hole evaporation.</text></g></svg></div><div class="t" style="left:5.8px;top:350.6px;font-size:7px;color:#5a5a5a;-webkit-text-stroke:0">7</div><div class="sl" style="top:350px"><svg width="84.5" height="47" viewBox="0 0 460 259" style="display:block"><rect width="460" height="259" fill="#fff"/><text x="32" y="41" font-family="Liberation Sans" font-size="20" fill="#3a3a3a">Wormholes</text><g font-family="Liberation Sans" font-size="13.2" fill="#2a2a2a" stroke="#2a2a2a" stroke-width="0.35"><text x="27" y="76.0">• Wormholes are hypothetical tunnels in spacetime that could connect</text><text x="33" y="92.5">distant parts of the universe. Some theories suggest that black holes</text><text x="33" y="109.0">may contain wormholes.</text></g></svg></div><div class="a" style="left:114.3px;top:1px;width:3.7px;height:266.5px;border-radius:2px;background:#b8ae9d"></div><div class="a" style="left:120px;top:0;width:1.2px;height:394px;background:#f7f3ea"></div></div>
<div id="main" class="a"></div>
<div class="a" style="left:136px;top:130.5px;width:460px;height:259px;box-shadow:0 0 3px rgba(0,0,0,0.15)">
  <svg width="460" height="259" style="display:block"><use href="#galaxy"/></svg>
</div>
<div class="a" style="left:121px;top:445px;width:490px;height:0.8px;background:#dadada"></div>
<div class="t" style="left:126px;top:452px;font-size:6.8px;color:#1a1a1a">Click to add notes</div>
<div class="a" style="left:610.3px;top:75px;width:1.1px;height:394px;background:#dfdfdf"></div>
<div id="designer" class="a" style="overflow:hidden">
  <div class="t" style="left:8.8px;top:3.3px;font-size:8px;color:#333;-webkit-text-stroke:0.22px">Designer</div>
  <svg class="a" style="left:0;top:0" width="157" height="394" viewBox="611 75 157 394">
    <circle cx="756.1" cy="81.8" r="3.5" fill="#6e6e6e"/>
    <path d="M754.7 80.4 L757.5 83.2 M757.5 80.4 L754.7 83.2" stroke="#fff" stroke-width="1.1"/>
    <!-- scroll track -->
    <rect x="761" y="94" width="6.4" height="375" fill="#f9f9f9"/>
    <rect x="762.2" y="145" width="3.9" height="198" rx="1.9" fill="#c3c3c3"/>
    <defs>
      <clipPath id="c1"><rect x="620.5" y="93.7" width="130.7" height="66.5"/></clipPath>
      <clipPath id="c1b"><circle cx="753.2" cy="127.4" r="75.4"/></clipPath>
      <clipPath id="c3"><rect x="620.5" y="251.7" width="130.7" height="73.2" rx="2"/></clipPath>
      <radialGradient id="dust" cx="0.5" cy="0.5" r="0.5">
        <stop offset="0" stop-color="#e8e8e8" stop-opacity="0.95"/>
        <stop offset="0.6" stop-color="#a0a0a0" stop-opacity="0.6"/>
        <stop offset="1" stop-color="#606060" stop-opacity="0"/>
      </radialGradient>
      <linearGradient id="smokeGrad" x1="0" y1="0" x2="0" y2="1">
        <stop offset="0" stop-color="#fff" stop-opacity="0"/>
        <stop offset="0.3" stop-color="#fff" stop-opacity="0"/>
        <stop offset="0.55" stop-color="#fff" stop-opacity="0.06"/>
        <stop offset="0.7" stop-color="#fff" stop-opacity="0.3"/>
        <stop offset="0.85" stop-color="#fff" stop-opacity="0.8"/>
        <stop offset="1" stop-color="#fff" stop-opacity="1"/>
      </linearGradient>
      <filter id="smoke" x="0" y="0" width="1" height="1" color-interpolation-filters="sRGB">
        <feTurbulence type="fractalNoise" baseFrequency="0.09" numOctaves="3" seed="4" result="n"/>
        <feColorMatrix in="n" type="matrix" values="0 0 0 0 1  0 0 0 0 1  0 0 0 0 1  2.6 0 0 0 -0.7" result="w"/>
        <feComposite in="w" in2="SourceGraphic" operator="in"/>
      </filter>
      <filter id="blur2" x="-30%" y="-50%" width="160%" height="200%"><feGaussianBlur stdDeviation="3"/></filter>
    </defs>
    <!-- card 1 -->
    <rect x="620.5" y="93.7" width="130.7" height="66.5" rx="0.5" fill="#fff" stroke="#dcdcdc" stroke-width="0.5"/>
    <g clip-path="url(#c1)">
      <g clip-path="url(#c1b)">
        <rect x="670" y="93" width="82" height="66" fill="#000"/>
        <rect x="676" y="93" width="76" height="68" fill="url(#smokeGrad)" filter="url(#smoke)"/>
        <ellipse cx="708" cy="128" rx="4" ry="14" fill="#888" opacity="0.35" filter="url(#blur2)"/>
        <g filter="url(#blur2)" opacity="0.9">
          <ellipse cx="724" cy="153" rx="14" ry="9" fill="#e8e8e8" opacity="0.75"/>
          <ellipse cx="744" cy="156" rx="10" ry="6" fill="#e0e0e0" opacity="0.7"/>
          <ellipse cx="700" cy="158" rx="18" ry="6" fill="#d0d0d0" opacity="0.6"/>
        </g>
      </g>
    </g>
    <text x="627.9" y="110" font-family="Liberation Sans" font-size="6.8" fill="#3a3a3a">Formation</text>
    <rect x="626.6" y="114.5" width="38" height="1" fill="#ec7a2e"/>
    <g font-family="Liberation Sans" font-size="2.6" fill="#444">
      <text x="627.5" y="120.5">•  Black holes are formed when</text>
      <text x="629.5" y="124">massive stars exhaust their</text>
      <text x="629.5" y="127.5">nuclear fuel and undergo</text>
      <text x="629.5" y="131">gravitational collapse. The core</text>
      <text x="629.5" y="134.5">contracts, and if the mass is</text>
      <text x="629.5" y="138">sufficient, it becomes a black</text>
      <text x="629.5" y="141.5">hole.</text>
    </g>
    <!-- card 2 -->
    <rect x="619.6" y="169" width="132.1" height="74.4" rx="2.5" fill="#111" stroke="#c9502a" stroke-width="1.8"/>
    <!-- card 3 -->
    <rect x="620.5" y="251.7" width="130.7" height="73.2" rx="2" fill="#fff" stroke="#dcdcdc" stroke-width="0.5"/>
    <g clip-path="url(#c3)">
      <circle cx="622.2" cy="288.3" r="43.1" fill="#ec7c30"/>
    </g>
    <text x="628.7" y="289.8" font-family="Liberation Sans" font-size="5.3" fill="#fff">Formation</text>
    <g font-family="Liberation Sans" font-size="3.3" fill="#222">
      <text x="669" y="281.5">•  Black holes are formed when massive stars</text>
      <text x="671.5" y="285.5">exhaust their nuclear fuel and undergo</text>
      <text x="671.5" y="289.5">gravitational collapse. The core contracts,</text>
      <text x="671.5" y="293.5">and if the mass is sufficient, it becomes a</text>
      <text x="671.5" y="297.5">black hole.</text>
    </g>
    <path d="M723 321.5 Q740 320 746.5 300" fill="none" stroke="#f5b82a" stroke-width="1.3" stroke-dasharray="4 2.5"/>
    <!-- card 4 -->
    <rect x="620.5" y="334.1" width="130.7" height="73.2" rx="2" fill="#fff" stroke="#dcdcdc" stroke-width="0.5"/>
    <text x="629.9" y="347.2" font-family="Liberation Sans" font-size="6.8" fill="#333" stroke="#333" stroke-width="0.1">Formation</text>
    <path d="M627 351.6 Q635 351 643 351.5 T659 351.4 T675 351.6 T691 351.3 T707 351.5 T723 351.3 T744 351.4" fill="none" stroke="#f2a877" stroke-width="1.5"/>
    <g font-family="Liberation Sans" font-size="2.6" fill="#444">
      <text x="629.5" y="357.5" font-size="2.75">•  Black holes are formed when massive stars exhaust their nuclear fuel and undergo</text>
      <text x="632" y="361" font-size="2.75">gravitational collapse. The core contracts, and if the mass is sufficient, it becomes a black</text>
      <text x="632" y="364.5" font-size="2.75">hole.</text>
    </g>
    <!-- card 5 -->
    <rect x="620.5" y="416.6" width="130.7" height="60" rx="2" fill="#f1f1f1" stroke="#dcdcdc" stroke-width="0.5"/>
    <path d="M620.5 434 V418.6 Q620.5 416.6 622.5 416.6 H749.2 Q751.2 416.6 751.2 418.6 V434 Z" fill="#262626"/>
    <text x="633.7" y="428" font-family="Liberation Sans" font-size="5" fill="#fff">Formation</text>
    <rect x="633" y="437.5" width="4.5" height="0.5" fill="#888"/>
    <g font-family="Liberation Sans" font-size="2.6" fill="#444">
      <text x="634" y="443" font-size="2.9">•  Black holes are formed when massive stars exhaust their nuclear fuel and</text>
      <text x="636.5" y="446.6" font-size="2.9">undergo gravitational collapse. The core contracts, and if the mass is</text>
      <text x="636.5" y="450.2" font-size="2.9">sufficient, it becomes a black hole.</text>
    </g>
  </svg>
  <div class="a" style="left:10px;top:95.6px;width:129.6px;height:71.7px;border-radius:1.2px;overflow:hidden"><svg width="129.6" height="71.7" viewBox="0 0 460 259" preserveAspectRatio="none" style="display:block;--tc:#8a8a8a;--tt:#666"><use href="#galaxy"/></svg></div>
</div>
<div id="status" class="a"></div>
<div class="t" style="left:12.6px;top:472.9px;font-size:6.55px;color:#5e5e5e;-webkit-text-stroke:0.1px">Slide 3 of 10</div>
<div class="t" style="left:60.4px;top:472.9px;font-size:6.65px;color:#5e5e5e;-webkit-text-stroke:0.1px">English (United States)</div>
<div class="t" style="left:414.6px;top:472.9px;font-size:6.57px;color:#5e5e5e;-webkit-text-stroke:0.1px">Download complete</div>
<div class="t" style="left:492.4px;top:472.9px;font-size:6.47px;color:#5e5e5e;-webkit-text-stroke:0.1px">Notes</div>
<div class="t" style="left:529.5px;top:472.9px;font-size:6.47px;color:#5e5e5e;-webkit-text-stroke:0.1px">Comments</div>
<div class="t" style="left:724px;top:472.9px;font-size:6.5px;color:#5e5e5e;-webkit-text-stroke:0.1px">93%</div>
<div class="a" style="left:566.2px;top:469.8px;width:19.2px;height:11.2px;background:#c9c9c9"></div>
<svg class="a" style="left:0;top:462px" width="768" height="19" viewBox="0 462 768 19">
  <g fill="none" stroke="#666" stroke-width="0.8">
    <path d="M483.3 473.2 H489.8 M483.3 475.4 H489.8 M483.3 477.4 H489.8"/>
  </g>
  <path d="M485 472.2 L486.5 470.8 L488 472.2 Z" fill="#666"/>
  <path d="M520.3 471.6 H527 V476.6 H523 L521.4 478.2 V476.6 H520.3 Z" fill="#666"/>
  <!-- normal view icon -->
  <rect x="572.6" y="472" width="7.4" height="6" fill="#fff" stroke="#707070" stroke-width="0.6"/>
  <rect x="574.8" y="472.9" width="4.3" height="3.2" fill="#fff" stroke="#707070" stroke-width="0.5"/>
  <path d="M574.8 477 H579" stroke="#707070" stroke-width="0.5"/>
  <!-- grid -->
  <g fill="#666"><rect x="591" y="472.2" width="3.2" height="2.2"/><rect x="595.6" y="472.2" width="3.4" height="2.2"/><rect x="591" y="476" width="3.2" height="2.2"/><rect x="595.6" y="476" width="3.4" height="2.2"/></g>
  <!-- book -->
  <path d="M609.5 472.5 Q611.5 471.5 613.6 472.5 V478.8 Q611.5 477.8 609.5 478.8 Z M613.6 472.5 Q615.7 471.5 617.8 472.5 V478.8 Q615.7 477.8 613.6 478.8 Z" fill="none" stroke="#666" stroke-width="0.75"/>
  <!-- presenter -->
  <rect x="629" y="472.4" width="7.6" height="4.6" fill="none" stroke="#666" stroke-width="0.75"/>
  <path d="M628.6 472.4 H637 M632.8 477 V479.2 M631 479.2 H634.6 M630.8 474.6 H634.8" stroke="#666" stroke-width="0.7" fill="none"/>
  <!-- zoom -->
  <path d="M646 475.2 H650" stroke="#666" stroke-width="1"/>
  <rect x="653.7" y="474.5" width="52" height="1.4" rx="0.7" fill="#8c8c8c"/>
  <circle cx="678" cy="475.2" r="4.1" fill="#fff" stroke="#cfcfcf" stroke-width="0.4"/>
  <path d="M709.3 475.2 H714.1 M711.7 472.8 V477.6" stroke="#666" stroke-width="1"/>
  <!-- fit -->
  <rect x="748.6" y="471.8" width="7.2" height="6.8" rx="0.8" fill="none" stroke="#777" stroke-width="0.7"/>
  <path d="M750.2 473.4 L751.3 474.5 M754.2 473.4 L753.1 474.5 M750.2 477 L751.3 475.9 M754.2 477 L753.1 475.9" stroke="#777" stroke-width="0.6"/>
</svg>

</div>
</body></html>
